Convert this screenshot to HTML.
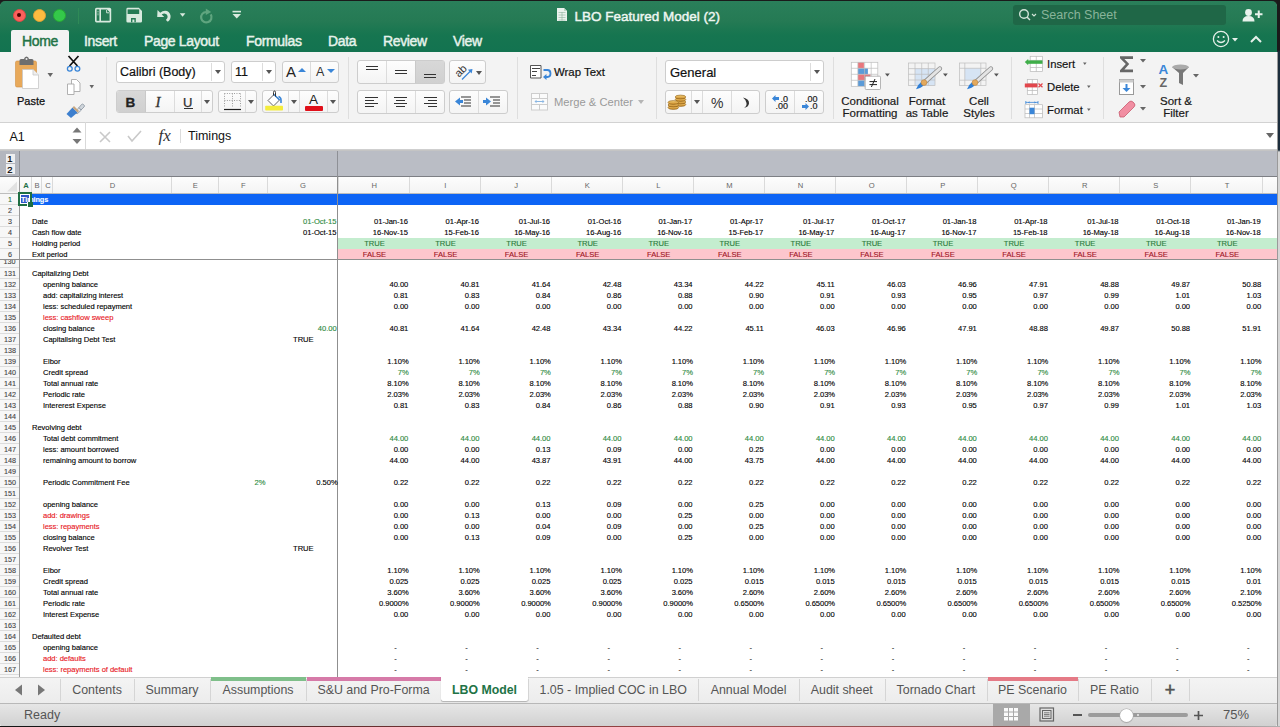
<!DOCTYPE html><html><head><meta charset="utf-8"><style>
*{margin:0;padding:0;box-sizing:border-box}
html,body{width:1280px;height:727px;overflow:hidden;background:#1e1e1e;font-family:"Liberation Sans",sans-serif}
.ab{position:absolute}
.t{position:absolute;white-space:nowrap;line-height:1}
.tab{position:absolute;top:34px;font-size:14px;letter-spacing:-0.35px;color:#e6f2eb;white-space:nowrap;line-height:1;-webkit-text-stroke:0.45px}
.btn{position:absolute;border:1px solid #cdcdcd;border-radius:3px;background:linear-gradient(#fdfdfd,#f4f4f4)}
.pr{background:linear-gradient(#d6d6d6,#cfcfcf);border-color:#b9b9b9}
.sep{position:absolute;width:1px;background:#dedede}
.vd{position:absolute;width:1px;background:#dcdcdc}
.dd{position:absolute;width:0;height:0;border-left:3px solid transparent;border-right:3px solid transparent;border-top:4px solid #555}
.c{position:absolute;white-space:nowrap;font-size:7.6px;line-height:11px;height:11px;color:#000;letter-spacing:-0.05px;-webkit-text-stroke:0.12px}
.rt{text-align:right}
.ct{text-align:center}
.lbl{position:absolute;font-size:11.5px;color:#1a1a1a;white-space:nowrap;line-height:1;text-align:center;-webkit-text-stroke:0.2px}
</style></head><body>

<div class="ab" style="left:0;top:2px;width:1277px;height:725px;background:#f3f3f3;border-radius:5px 5px 0 0;overflow:hidden">
</div>
<div class="ab" style="left:0;top:1.3px;width:1277px;height:50.7px;background:linear-gradient(#2a7f5a 0px,#257a54 20px,#1b7751 29px,#167550 34px,#137350 50px);border-radius:5px 5px 0 0"></div>
<div class="ab" style="left:12.5px;top:8.5px;width:13px;height:13px;border-radius:50%;background:#fc605c;border:1px solid #de4a46"></div>
<div class="ab" style="left:32.5px;top:8.5px;width:13px;height:13px;border-radius:50%;background:#fdbc40;border:1px solid #dea236"></div>
<div class="ab" style="left:52.5px;top:8.5px;width:13px;height:13px;border-radius:50%;background:#34c84a;border:1px solid #27aa35"></div>
<div class="ab" style="left:17px;top:13px;width:4px;height:4px;border-radius:50%;background:#4d0000"></div>
<div class="ab" style="left:78px;top:8px;width:1px;height:16px;background:#2f8a57"></div>
<svg class="ab" style="left:85px;top:2px" width="165" height="28" viewBox="0 0 165 28">
<rect x="10" y="5.8" width="16.2" height="14.6" rx="1.6" fill="#d9eadf"/>
<rect x="11.6" y="7.4" width="2.8" height="11.4" fill="#257a54"/>
<circle cx="13" cy="9.2" r="0.55" fill="#d9eadf"/><circle cx="13" cy="11" r="0.55" fill="#d9eadf"/><circle cx="13" cy="12.8" r="0.55" fill="#d9eadf"/>
<path d="M16 7.4h6l2.6 2.6v8.8h-8.6z" fill="#257a54"/>
<path d="M21.6 8v2.8h2.6" fill="none" stroke="#d9eadf" stroke-width="0.9"/>
<g transform="translate(-1.6 0)"><path d="M43 5.8h12.4l3.2 3.2v10.2q0 1.4 -1.4 1.4h-12.8q-1.4 0 -1.4 -1.4v-12q0 -1.4 1.4 -1.4z" fill="#d9eadf"/>
<rect x="44.2" y="7.4" width="11.6" height="4.6" fill="#257a54"/>
<path d="M47.6 20.2v-4.2h4.8v4.2h-1.4v-2.8h-2v2.8z" fill="#257a54"/></g>
<path transform="translate(-5.5 -3.2) scale(1.05)" d="M74 17.4l0.3 -6.8l2.6 2.6q2 -1.8 4.6 -1.8q4.2 0.2 5.2 4.4q0.5 3.6 -2.6 6l-1.8 -1.7q2 -1.6 1.6 -3.8q-0.6 -2.4 -3 -2.4q-1.4 0 -2.6 1l2.4 2.4z" fill="#d9eadf"/>
<path d="M179.7 0z" />
<path d="M94.8 11.2h5.6l-2.8 3.6z" fill="#d9eadf"/>
<g transform="translate(-1.2 -1.2)"><path d="M122.5 11.2a5.2 5.2 0 1 0 4.4 2.4" fill="none" stroke="#5fa57f" stroke-width="2.2"/>
<path d="M122 7.8l5.4 3.4l-5.4 3z" fill="#5fa57f"/></g>
<rect x="147.5" y="8.8" width="8.5" height="1.6" fill="#d9eadf"/>
<path d="M147.5 12h8.5l-4.25 4.5z" fill="#d9eadf"/>
</svg>
<svg class="ab" style="left:556px;top:7px" width="12" height="15"><path d="M1 1h7l3 3v10h-10z" fill="#eaf2ed"/><path d="M8 1v3h3" fill="#bcd5c6"/><path d="M2.5 5.5h7M2.5 8h7M2.5 10.5h7M2.5 13h7M6 5v8.5" stroke="#8fb29e" stroke-width="0.6"/></svg>
<div class="t" style="left:574.5px;top:9.6px;font-size:13.5px;color:#eef6f1;-webkit-text-stroke:0.45px">LBO Featured Model (2)</div>
<div class="ab" style="left:1013px;top:5px;width:213px;height:19.5px;background:#1f6747;border-radius:3px"></div>
<svg class="ab" style="left:1018px;top:8px" width="22" height="14"><circle cx="6" cy="6" r="4.3" fill="none" stroke="#d2e4d9" stroke-width="1.4"/><line x1="9" y1="9" x2="12" y2="12" stroke="#d2e4d9" stroke-width="1.5"/><path d="M14 6l2 2l2-2" fill="none" stroke="#d2e4d9" stroke-width="1.1"/></svg>
<div class="t" style="left:1041px;top:9px;font-size:12.5px;color:#88b49a">Search Sheet</div>
<svg class="ab" style="left:1240px;top:6px" width="24" height="18"><circle cx="8.5" cy="6.5" r="3.4" fill="#e8f2ec"/><path d="M2.5 15.5q0-5.5 6-5.5t6 5.5z" fill="#e8f2ec"/><path d="M15 8.2h7.5M18.75 4.5v7.5" stroke="#e8f2ec" stroke-width="2"/></svg>
<div class="ab" style="left:11px;top:30px;width:58px;height:24px;background:#f3f3f3;border-radius:2px 2px 0 0"></div>
<div class="tab" style="left:22px;color:#217346">Home</div>
<div class="tab" style="left:84px">Insert</div>
<div class="tab" style="left:144px">Page Layout</div>
<div class="tab" style="left:246px">Formulas</div>
<div class="tab" style="left:328px">Data</div>
<div class="tab" style="left:383px">Review</div>
<div class="tab" style="left:453px">View</div>
<svg class="ab" style="left:1210px;top:29px" width="60" height="20"><circle cx="11" cy="10" r="7.6" fill="none" stroke="#e6f0ea" stroke-width="1.3"/><circle cx="8.4" cy="8" r="1" fill="#e6f0ea"/><circle cx="13.6" cy="8" r="1" fill="#e6f0ea"/><path d="M7 11.5q4 4 8 0" fill="none" stroke="#e6f0ea" stroke-width="1.2"/><path d="M22 9l3 3.5l3-3.5z" fill="#e6f0ea"/><path d="M41 13l5-5l5 5" fill="none" stroke="#e6f0ea" stroke-width="2"/></svg>
<div class="ab" style="left:0;top:52px;width:1277px;height:70px;background:#f3f3f3"></div>
<svg class="ab" style="left:0px;top:52px" width="100" height="70" viewBox="0 0 100 70">
<rect x="15.5" y="9" width="21" height="26" rx="1.5" fill="#e8a95a" stroke="#d18f40" stroke-width="0.6"/>
<path d="M19.5 8.5q0-1.5 1.5-1.5h3q0.5-2.5 2.5-2.5t2.5 2.5h3q1.5 0 1.5 1.5v4.5h-14z" fill="#6e6e6e"/>
<circle cx="26.5" cy="7" r="1" fill="#e8e8e8"/>
<path d="M22.5 17.5h10.5l5.5 5.5v13.5h-16z" fill="#fff" stroke="#c8c8c8" stroke-width="0.8"/>
<path d="M33 17.5v5.5h5.5" fill="#eee" stroke="#c8c8c8" stroke-width="0.8"/>
<path d="M47.5 21l2.75 4l2.75-4z" fill="#666"/>
<path d="M68.5 4l9 10M78.5 4l-9 10" stroke="#111" stroke-width="1.7"/>
<circle cx="69.8" cy="16.8" r="2.4" fill="none" stroke="#3a86d8" stroke-width="1.3"/><circle cx="77.4" cy="16.8" r="2.4" fill="none" stroke="#3a86d8" stroke-width="1.3"/>
<path d="M71.5 27.5h5l3.5 3.5v8.5h-8.5z" fill="#fff" stroke="#a8a8a8" stroke-width="0.9"/>
<path d="M67.5 32h6.5v10.5h-6.5z" fill="#fff" stroke="#a8a8a8" stroke-width="0.9"/>
<path d="M89.5 33l2.25 3.5l2.25-3.5z" fill="#666"/>
<path d="M75 60l4-4.5l2.5 2.5l-4.5 4z" fill="#dfe3e8" stroke="#7e8a96" stroke-width="0.7"/>
<path d="M79 55.5l2.5-3q1-1 2 0l0.5 0.5q1 1 0 2l-3 3z" fill="#cfd5db" stroke="#7e8a96" stroke-width="0.7"/>
<path d="M66.5 62l6-6.5l5 5l-6.5 5.5z" fill="#3d7fce"/>
<path d="M72.5 55.5l1.5-1.5l5 5l-1.5 1.5z" fill="#c9a77f"/>
</svg>
<div class="t" style="left:17px;top:96px;font-size:11px;color:#111;-webkit-text-stroke:0.25px">Paste</div>
<div class="sep" style="left:106px;top:57px;height:62px"></div>
<div class="btn" style="left:116px;top:61px;width:109px;height:22px;background:#fff"></div>
<div class="vd" style="left:211px;top:63px;height:18px"></div>
<div class="t" style="left:120px;top:66px;font-size:12.5px;color:#111;-webkit-text-stroke:0.2px">Calibri (Body)</div>
<div class="dd" style="left:215px;top:70px"></div>
<div class="btn" style="left:231px;top:61px;width:45px;height:22px;background:#fff"></div>
<div class="vd" style="left:262px;top:63px;height:18px"></div>
<div class="t" style="left:235px;top:66px;font-size:12.5px;color:#111;-webkit-text-stroke:0.2px">11</div>
<div class="dd" style="left:266px;top:70px"></div>
<div class="btn" style="left:282px;top:61px;width:57px;height:22px"></div>
<div class="vd" style="left:310px;top:62px;height:20px"></div>
<div class="t" style="left:286px;top:64px;font-size:15px;color:#222">A</div>
<svg class="ab" style="left:298px;top:67px" width="8" height="5"><path d="M0 5l4-4l4 4z" fill="#3a86d8"/></svg>
<div class="t" style="left:316px;top:66px;font-size:12.5px;color:#333">A</div>
<svg class="ab" style="left:327px;top:69px" width="8" height="5"><path d="M0 0h8l-4 4z" fill="#3a86d8"/></svg>
<div class="btn" style="left:116px;top:90px;width:97px;height:23px"></div>
<div class="ab" style="left:117px;top:91px;width:28px;height:21px;background:linear-gradient(#d8d8d8,#d0d0d0);border-radius:2px 0 0 2px"></div>
<div class="vd" style="left:145px;top:91px;height:21px;background:#c9c9c9"></div>
<div class="vd" style="left:174px;top:91px;height:21px"></div>
<div class="vd" style="left:201px;top:91px;height:21px"></div>
<div class="t" style="left:125.5px;top:96px;font-size:13.5px;font-weight:bold;color:#222;-webkit-text-stroke:0.3px">B</div>
<div class="t" style="left:155.5px;top:95px;font-size:15px;font-style:italic;font-family:'Liberation Serif',serif;color:#333;-webkit-text-stroke:0.3px">I</div>
<div class="t" style="left:183px;top:96px;font-size:13px;color:#333;-webkit-text-stroke:0.25px">U</div><div class="ab" style="left:183.5px;top:107.8px;width:9.5px;height:1.2px;background:#333"></div>
<div class="dd" style="left:204px;top:100px"></div>
<div class="btn" style="left:218px;top:90px;width:39px;height:23px"></div>
<div class="vd" style="left:245px;top:91px;height:21px"></div>
<svg class="ab" style="left:222px;top:91px" width="22" height="20"><g stroke="#8a8a8a" stroke-width="0.9" stroke-dasharray="0.9 1.5"><path d="M2.5 2.5h16M2.5 9.5h16M2.5 2.5v14M10.5 2.5v14M18.5 2.5v14"/></g><path d="M2 18.5h17" stroke="#222" stroke-width="1.2"/></svg>
<div class="dd" style="left:248px;top:100px"></div>
<div class="btn" style="left:262px;top:90px;width:77px;height:23px"></div>
<div class="vd" style="left:287.5px;top:91px;height:21px"></div>
<div class="vd" style="left:299px;top:91px;height:21px"></div>
<div class="vd" style="left:327px;top:91px;height:21px"></div>
<svg class="ab" style="left:258px;top:86px" width="30" height="30"><path d="M10 14.5l6-6l5.5 5.5l-6 6z" fill="#fff" stroke="#555" stroke-width="0.9"/><path d="M16 8.5l5.5 5.5" stroke="#3a86d8" stroke-width="1.4"/><path d="M15.5 9.5v-3q0-1.5 1-1.5t1 1.5v4" fill="none" stroke="#333" stroke-width="1"/><path d="M20.5 10.5q2.5 1 2.5 3.5v3" fill="none" stroke="#3a86d8" stroke-width="1.6"/><rect x="7.2" y="19.7" width="17.8" height="4.9" rx="0.8" fill="#f4ec3c"/></svg>
<div class="dd" style="left:291px;top:100px"></div>
<div class="t" style="left:309px;top:93px;font-size:13.5px;color:#222">A</div>
<div class="ab" style="left:305px;top:106px;width:18px;height:4.8px;background:#e0101a;border-radius:1px"></div>
<div class="dd" style="left:330px;top:100px"></div>
<div class="sep" style="left:348px;top:57px;height:62px"></div>
<div class="btn" style="left:357px;top:60px;width:88px;height:24px"></div>
<div class="ab" style="left:416px;top:61px;width:28px;height:22px;background:linear-gradient(#d8d8d8,#d0d0d0)"></div>
<div class="vd" style="left:386px;top:61px;height:22px"></div><div class="vd" style="left:415px;top:61px;height:22px;background:#c9c9c9"></div>
<svg class="ab" style="left:357px;top:60px" width="88" height="24"><g stroke="#333" stroke-width="1.1"><path d="M9 6.5h12M9 9.5h12"/><path d="M38 10.5h12M38 13.5h12"/><path d="M67 14.5h12M67 17.5h12"/></g></svg>
<div class="btn" style="left:449px;top:60px;width:37px;height:24px"></div>
<svg class="ab" style="left:449px;top:60px" width="37" height="24"><text x="5" y="14" font-size="11" font-family="Liberation Sans" fill="#333" transform="rotate(-45 12 10)">ab</text><path d="M13 19.5l9.5-9.5" stroke="#3a86d8" stroke-width="1.2"/><path d="M23.5 9l-4.6 0.8l3.8 3.8z" fill="#3a86d8"/></svg>
<div class="dd" style="left:476px;top:71px"></div>
<div class="btn" style="left:357px;top:90px;width:88px;height:24px"></div>
<div class="vd" style="left:386px;top:91px;height:22px"></div><div class="vd" style="left:415px;top:91px;height:22px"></div>
<svg class="ab" style="left:357px;top:90px" width="88" height="24"><g stroke="#333" stroke-width="1"><path d="M8 7.5h13M8 10.5h9M8 13.5h13M8 16.5h9"/><path d="M37 7.5h13M39 10.5h9M37 13.5h13M39 16.5h9"/><path d="M67 7.5h13M71 10.5h9M67 13.5h13M71 16.5h9"/></g></svg>
<div class="btn" style="left:449px;top:90px;width:59px;height:24px"></div>
<div class="vd" style="left:478px;top:91px;height:22px"></div>
<svg class="ab" style="left:449px;top:90px" width="59" height="24"><g stroke="#333" stroke-width="1.1"><path d="M12 7h10M15 10h7M15 13h7M12 16h10"/><path d="M41 7h10M44 10h7M44 13h7M41 16h10"/></g><path d="M6 11.5l5-4v8z" fill="#3a86d8"/><path d="M11 10h3v3h-3z" fill="#3a86d8"/><path d="M42 11.5l-5-4v8z" fill="#3a86d8"/><path d="M34 10h4v3h-4z" fill="#3a86d8"/></svg>
<div class="sep" style="left:517px;top:57px;height:62px"></div>
<svg class="ab" style="left:529px;top:64px" width="24" height="16"><path d="M1.5 1.5h10.5v12.5h-10.5z" fill="#fff" stroke="#555" stroke-width="1"/><path d="M3 4.5h8M3 7.5h5M3 11.5h4" stroke="#444" stroke-width="1"/><path d="M14.5 6h4q3 0 3 3.5t-3 3.5h-2" fill="none" stroke="#3a86d8" stroke-width="1.8"/><path d="M14 13l3.5-3v6z" fill="#3a86d8"/></svg>
<div class="t" style="left:554px;top:67px;font-size:11.4px;color:#111;-webkit-text-stroke:0.2px">Wrap Text</div>
<svg class="ab" style="left:530px;top:92px" width="19" height="19"><rect x="1.5" y="1.5" width="16" height="16.5" fill="#fbfbfb" stroke="#cdcdcd" stroke-width="1"/><path d="M1.5 6.5h16M1.5 12.5h16M9.5 1.5v5M9.5 12.5v5.5" stroke="#cdcdcd" stroke-width="1"/><path d="M5 9.5h9" stroke="#8ab6e2" stroke-width="1"/><path d="M4.5 9.5l2-1.8v3.6zM14.5 9.5l-2-1.8v3.6z" fill="#8ab6e2"/></svg>
<div class="t" style="left:554px;top:97px;font-size:11.2px;color:#9a9a9a">Merge &amp; Center</div>
<div class="dd" style="left:638px;top:100px;border-top-color:#b5b5b5"></div>
<div class="sep" style="left:656px;top:57px;height:62px"></div>
<div class="btn" style="left:665px;top:60px;width:159px;height:24px;background:#fff"></div>
<div class="vd" style="left:810px;top:63px;height:18px"></div>
<div class="t" style="left:670px;top:66px;font-size:13px;color:#111;-webkit-text-stroke:0.2px">General</div>
<div class="dd" style="left:814px;top:70px"></div>
<div class="btn" style="left:665px;top:90px;width:95px;height:24px"></div>
<div class="vd" style="left:691px;top:91px;height:22px"></div><div class="vd" style="left:702px;top:91px;height:22px"></div><div class="vd" style="left:731px;top:91px;height:22px"></div>
<svg class="ab" style="left:660px;top:85px" width="170" height="35" viewBox="0 0 170 35"><defs><linearGradient id="cg" x1="0" y1="0" x2="0" y2="1"><stop offset="0" stop-color="#f6d27a"/><stop offset="1" stop-color="#c98a2a"/></linearGradient></defs><g fill="url(#cg)" stroke="#8a5a14" stroke-width="0.6"><ellipse cx="20.5" cy="19.5" rx="5.3" ry="1.9"/><ellipse cx="20.5" cy="17" rx="5.3" ry="1.9"/><ellipse cx="20.5" cy="14.5" rx="5.3" ry="1.9"/><ellipse cx="20.5" cy="12" rx="5.3" ry="1.9"/><ellipse cx="13.3" cy="22.5" rx="5.3" ry="1.9"/><ellipse cx="13.3" cy="20" rx="5.3" ry="1.9"/><ellipse cx="13.3" cy="17.5" rx="5.3" ry="1.9"/></g><path d="M83 12.5q6.5 1.5 6 6q-0.5 3.5 -5 4.5q3 -2 2.5 -5q-0.3 -3 -3.5 -5.5z" fill="#333"/><path d="M112 13.5l3.5-3.5v2h3.5v3h-3.5v2z" fill="#3a86d8"/><path d="M149 21.5l-3.5-3.5v2h-3.5v3h3.5v2z" fill="#3a86d8"/></svg>
<div class="dd" style="left:694px;top:100px"></div>
<div class="btn" style="left:765px;top:90px;width:59px;height:24px"></div>
<div class="vd" style="left:794px;top:91px;height:22px"></div>
<svg class="ab" style="left:660px;top:85px" width="170" height="35" viewBox="0 0 170 35"><path d="M112 13.5l3.5-3.5v2h3.5v3h-3.5v2z" fill="#3a86d8"/><path d="M149 21.5l-3.5-3.5v2h-3.5v3h3.5v2z" fill="#3a86d8"/></svg>
<div class="t" style="left:711px;top:96px;font-size:14px;color:#333">%</div>
<div class="t" style="left:780.5px;top:94.5px;font-size:9px;color:#222;-webkit-text-stroke:0.2px">.0</div>
<div class="t" style="left:775.5px;top:102px;font-size:9px;color:#222;-webkit-text-stroke:0.2px">.00</div>
<div class="t" style="left:805px;top:94.5px;font-size:9px;color:#222;-webkit-text-stroke:0.2px">.00</div>
<div class="t" style="left:810px;top:102px;font-size:9px;color:#222;-webkit-text-stroke:0.2px">.0</div>
<div class="sep" style="left:833px;top:57px;height:62px"></div>
<svg class="ab" style="left:840px;top:55px" width="170" height="40" viewBox="0 0 170 40">
<rect x="11.3" y="7.3" width="26.5" height="24" fill="#fff"/>
<rect x="17.9" y="7.3" width="6" height="6" fill="#e8777d"/><rect x="17.9" y="13.3" width="10" height="6" fill="#5b9bd8"/><rect x="17.9" y="19.3" width="12.6" height="6" fill="#e8777d"/><rect x="17.9" y="25.3" width="6.7" height="5.9" fill="#5b9bd8"/>
<g fill="none" stroke="#bdbdbd" stroke-width="0.7"><rect x="11.3" y="7.3" width="26.5" height="24"/><path d="M17.9 7.3v24M24.6 7.3v24M31.2 7.3v24M11.3 13.3h26.5M11.3 19.3h26.5M11.3 25.3h26.5"/></g>
<rect x="25.2" y="21.2" width="15.3" height="13.3" rx="1" fill="#fff" stroke="#9a9a9a" stroke-width="0.7"/>
<path d="M29.5 26.6h7.5M29.5 29.6h7.5M35 24l-3.6 8" stroke="#222" stroke-width="1"/>
<path d="M45 18.6h4.8l-2.4 2.8z" fill="#555"/>
<rect x="75" y="13.6" width="20" height="16.9" fill="#d6e4f4"/>
<g fill="none" stroke="#bdbdbd" stroke-width="0.7"><rect x="68.4" y="8" width="26.6" height="22.5"/><path d="M75 8v22.5M81.7 8v22.5M88.3 8v22.5M68.4 13.6h26.6M68.4 19.3h26.6M68.4 25h26.6"/></g>
<g transform="translate(0 0)"><path d="M99.8 13.6l-13.8 12.4" stroke="#8e8e8e" stroke-width="4.6" stroke-linecap="round"/><path d="M99.8 13.6l-13.8 12.4" stroke="#e4e4e4" stroke-width="3" stroke-linecap="round"/><path d="M76 34.2q1.5 -4.5 5 -7l3 2.6q-3 3.6 -8 4.4z" fill="#2f7fd6"/><circle cx="84" cy="27.6" r="2.9" fill="#e3a95c" stroke="#b57a35" stroke-width="0.5"/></g>
<path d="M103 18.6h4.8l-2.4 2.8z" fill="#555"/>
<rect x="124.8" y="13.3" width="16" height="11.9" fill="#d6e4f4"/>
<g fill="none" stroke="#bdbdbd" stroke-width="0.7"><rect x="119.5" y="8" width="26.5" height="22.5"/><path d="M124.8 8v22.5M140.8 8v22.5M119.5 13.3h26.5M119.5 25.2h26.5"/></g>
<g transform="translate(51 0)"><path d="M99.8 13.6l-13.8 12.4" stroke="#8e8e8e" stroke-width="4.6" stroke-linecap="round"/><path d="M99.8 13.6l-13.8 12.4" stroke="#e4e4e4" stroke-width="3" stroke-linecap="round"/><path d="M76 34.2q1.5 -4.5 5 -7l3 2.6q-3 3.6 -8 4.4z" fill="#2f7fd6"/><circle cx="84" cy="27.6" r="2.9" fill="#e3a95c" stroke="#b57a35" stroke-width="0.5"/></g>
<path d="M154 18.6h4.8l-2.4 2.8z" fill="#555"/>
</svg>
<div class="lbl" style="left:830px;top:96px;width:80px">Conditional</div>
<div class="lbl" style="left:830px;top:108px;width:80px">Formatting</div>
<div class="lbl" style="left:897px;top:96px;width:60px">Format</div>
<div class="lbl" style="left:897px;top:108px;width:60px">as Table</div>
<div class="lbl" style="left:949px;top:96px;width:60px">Cell</div>
<div class="lbl" style="left:949px;top:108px;width:60px">Styles</div>
<div class="sep" style="left:1011px;top:57px;height:62px"></div>
<svg class="ab" style="left:1015px;top:52px" width="85" height="70" viewBox="0 0 85 70">
<g fill="#fff" stroke="#b8b8b8" stroke-width="0.7"><rect x="15.2" y="4.3" width="12.3" height="15.2"/></g>
<path d="M15.2 8.4h12.3M15.2 15.5h12.3M21.3 4.3v15.2" stroke="#b8b8b8" stroke-width="0.7"/>
<rect x="13" y="8.4" width="14.5" height="3.4" fill="#3fae49"/><path d="M9.8 10.1l3.4 -3.2v6.4z" fill="#3fae49"/>
<g fill="#fff" stroke="#b8b8b8" stroke-width="0.7"><rect x="12.3" y="27.5" width="10.1" height="15.1"/></g>
<path d="M12.3 31.5h10.1M12.3 38.5h10.1M17.3 27.5v15.1" stroke="#b8b8b8" stroke-width="0.7"/>
<rect x="9.8" y="31.5" width="12.6" height="3.9" fill="#e2464c"/><path d="M23.5 31.5l4 3.8M27.5 31.5l-4 3.8" stroke="#e2464c" stroke-width="1.2"/>
<path d="M10.8 50.4h12.2" stroke="#3a86d8" stroke-width="0.8"/><path d="M10.8 49v3M23 49v3" stroke="#3a86d8" stroke-width="0.8"/><path d="M13 50.4l1.5-1.2v2.4zM21 50.4l-1.5-1.2v2.4z" fill="#3a86d8"/>
<g fill="#fff" stroke="#b8b8b8" stroke-width="0.7"><rect x="10" y="52.7" width="17.5" height="13.1"/></g>
<path d="M10 57h17.5M10 61.5h17.5M14.5 52.7v13.1M19.5 52.7v13.1" stroke="#b8b8b8" stroke-width="0.7"/>
<rect x="14.5" y="55.7" width="5" height="6.5" fill="#3a86d8"/>
<path d="M68 10.4h3.6l-1.8 2.6zM72 33.4h3.6l-1.8 2.6zM72 56.4h3.6l-1.8 2.6z" fill="#666"/>
</svg>
<div class="t" style="left:1047px;top:59px;font-size:11.3px;color:#111;-webkit-text-stroke:0.15px">Insert</div>
<div class="t" style="left:1047px;top:82px;font-size:11.3px;color:#111;-webkit-text-stroke:0.15px">Delete</div>
<div class="t" style="left:1047px;top:105px;font-size:11.3px;color:#111;-webkit-text-stroke:0.15px">Format</div>
<div class="sep" style="left:1103px;top:57px;height:62px"></div>
<svg class="ab" style="left:1116px;top:55px" width="90" height="64" viewBox="0 0 90 64">
<path d="M4 1.3h13v2.8h-8.6l4.8 5l-4.8 5.3h8.6v2.8h-13v-2l5.8-6.1l-5.8-5.8z" fill="#666"/>
<path d="M24 4l3 3.5l3-3.5z" fill="#666"/>
<rect x="3.5" y="24.5" width="14" height="15" fill="#fff" stroke="#999"/><rect x="3.5" y="24.5" width="14" height="3" fill="#ccc"/><path d="M10.5 29v5" stroke="#3a86d8" stroke-width="2"/><path d="M6.5 33h8l-4 4z" fill="#3a86d8"/>
<path d="M24 30l3 3.5l3-3.5z" fill="#666"/>
<path d="M3 57l10-10q2-2 4 0l1 1q2 2 0 4l-10 10h-4z" fill="#f18ea2" stroke="#c85a6f" stroke-width="0.8"/>
<path d="M24 52l3 3.5l3-3.5z" fill="#666"/>
<text x="42.5" y="18.6" font-size="13.5" font-weight="bold" font-family="Liberation Sans" fill="#3a86d8">A</text>
<text x="43.5" y="31.8" font-size="12.5" font-weight="bold" font-family="Liberation Sans" fill="#666">Z</text>
<path d="M56 12q9-4 17 0l-6 6v12l-4-2v-10z" fill="#777"/><ellipse cx="64.5" cy="12" rx="8" ry="2.5" fill="#aaa"/>
<path d="M77 19l3 3.5l3-3.5z" fill="#666"/>
</svg>
<div class="lbl" style="left:1146px;top:96px;width:60px">Sort &amp;</div>
<div class="lbl" style="left:1146px;top:108px;width:60px">Filter</div>
<div class="ab" style="left:0;top:121.5px;width:1277px;height:1px;background:#d2d2d2"></div>
<div class="ab" style="left:0;top:122.5px;width:1277px;height:26.5px;background:#fff"></div>
<div class="ab" style="left:85px;top:122px;width:1px;height:28px;background:#d9d9d9"></div>
<div class="t" style="left:9.5px;top:131px;font-size:12.5px;color:#111">A1</div>
<svg class="ab" style="left:71.5px;top:126px" width="10" height="20"><path d="M0.5 6.5l4.5-5l4.5 5z" fill="#777"/><path d="M0.5 13l4.5 5l4.5-5z" fill="#777"/></svg>
<svg class="ab" style="left:99px;top:131px" width="14" height="12"><path d="M1 1l10 10M11 1l-10 10" stroke="#c9c9c9" stroke-width="1.6"/></svg>
<svg class="ab" style="left:127px;top:130px" width="16" height="13"><path d="M1 6l4 5l9-10" fill="none" stroke="#c9c9c9" stroke-width="1.6"/></svg>
<div class="t" style="left:158.5px;top:127px;font-size:17px;font-style:italic;font-family:'Liberation Serif',serif;color:#333">fx</div>
<div class="ab" style="left:180px;top:129px;width:1px;height:14px;background:#dcdcdc"></div>
<div class="t" style="left:188px;top:130px;font-size:12.5px;color:#111">Timings</div>
<svg class="ab" style="left:1265px;top:132px" width="10" height="8"><path d="M1 1h8l-4 5z" fill="#666"/></svg>
<div class="ab" style="left:0;top:148.8px;width:1277px;height:1px;background:#cfcfcf"></div>
<div class="ab" style="left:0;top:150.3px;width:1277px;height:1px;background:#c4c4c4"></div>
<div class="ab" style="left:0;top:151px;width:1277px;height:25px;background:#babdc5"></div>
<div class="ab" style="left:0;top:151px;width:20px;height:25px;background:#b3b6be"></div>
<div class="ab" style="left:19px;top:151px;width:1px;height:25px;background:#8e9096"></div>
<div class="ab" style="left:337px;top:151px;width:1px;height:25px;background:#8e9096"></div>
<div class="ab" style="left:5.5px;top:153.5px;width:9px;height:9.5px;background:#eeeff1"></div>
<div class="ab" style="left:5.5px;top:164px;width:9px;height:9.5px;background:#eeeff1"></div>
<div class="t" style="left:5.5px;top:154px;width:9px;text-align:center;font-size:9.5px;color:#000;-webkit-text-stroke:0.2px">1</div>
<div class="t" style="left:5.5px;top:164.5px;width:9px;text-align:center;font-size:9.5px;color:#000;-webkit-text-stroke:0.2px">2</div>
<div class="ab" style="left:0;top:175.6px;width:1277px;height:1.2px;background:#7d7f84"></div>
<div class="ab" style="left:0;top:176.8px;width:1277px;height:500.2px;background:#fff"></div>
<div class="ab" style="left:0;top:176.8px;width:1277px;height:16.6px;background:linear-gradient(#fdfdfd,#f4f4f4)"></div>
<svg class="ab" style="left:7px;top:181px" width="11" height="11"><path d="M10 0.5v10h-10z" fill="#e2e2e2"/></svg>
<div class="ab" style="left:30.60px;top:177px;width:1px;height:16px;background:#dadada"></div>
<div class="c ct" style="left:20.50px;top:179.5px;width:11.10px;font-size:7.6px;letter-spacing:0;-webkit-text-stroke:0;color:#1e7145;font-weight:bold">A</div>
<div class="ab" style="left:41.40px;top:177px;width:1px;height:16px;background:#dadada"></div>
<div class="c ct" style="left:31.60px;top:179.5px;width:10.80px;font-size:7.6px;letter-spacing:0;-webkit-text-stroke:0;color:#666;font-weight:normal">B</div>
<div class="ab" style="left:52.40px;top:177px;width:1px;height:16px;background:#dadada"></div>
<div class="c ct" style="left:42.40px;top:179.5px;width:11.00px;font-size:7.6px;letter-spacing:0;-webkit-text-stroke:0;color:#666;font-weight:normal">C</div>
<div class="ab" style="left:170.60px;top:177px;width:1px;height:16px;background:#dadada"></div>
<div class="c ct" style="left:53.40px;top:179.5px;width:118.20px;font-size:7.6px;letter-spacing:0;-webkit-text-stroke:0;color:#666;font-weight:normal">D</div>
<div class="ab" style="left:218.00px;top:177px;width:1px;height:16px;background:#dadada"></div>
<div class="c ct" style="left:171.60px;top:179.5px;width:47.40px;font-size:7.6px;letter-spacing:0;-webkit-text-stroke:0;color:#666;font-weight:normal">E</div>
<div class="ab" style="left:266.50px;top:177px;width:1px;height:16px;background:#dadada"></div>
<div class="c ct" style="left:219.00px;top:179.5px;width:48.50px;font-size:7.6px;letter-spacing:0;-webkit-text-stroke:0;color:#666;font-weight:normal">F</div>
<div class="ab" style="left:337.60px;top:177px;width:1px;height:16px;background:#dadada"></div>
<div class="c ct" style="left:267.50px;top:179.5px;width:71.10px;font-size:7.6px;letter-spacing:0;-webkit-text-stroke:0;color:#666;font-weight:normal">G</div>
<div class="ab" style="left:408.67px;top:177px;width:1px;height:16px;background:#dadada"></div>
<div class="c ct" style="left:338.60px;top:179.5px;width:71.07px;font-size:7.6px;letter-spacing:0;-webkit-text-stroke:0;color:#666;font-weight:normal">H</div>
<div class="ab" style="left:479.74px;top:177px;width:1px;height:16px;background:#dadada"></div>
<div class="c ct" style="left:409.67px;top:179.5px;width:71.07px;font-size:7.6px;letter-spacing:0;-webkit-text-stroke:0;color:#666;font-weight:normal">I</div>
<div class="ab" style="left:550.81px;top:177px;width:1px;height:16px;background:#dadada"></div>
<div class="c ct" style="left:480.74px;top:179.5px;width:71.07px;font-size:7.6px;letter-spacing:0;-webkit-text-stroke:0;color:#666;font-weight:normal">J</div>
<div class="ab" style="left:621.88px;top:177px;width:1px;height:16px;background:#dadada"></div>
<div class="c ct" style="left:551.81px;top:179.5px;width:71.07px;font-size:7.6px;letter-spacing:0;-webkit-text-stroke:0;color:#666;font-weight:normal">K</div>
<div class="ab" style="left:692.95px;top:177px;width:1px;height:16px;background:#dadada"></div>
<div class="c ct" style="left:622.88px;top:179.5px;width:71.07px;font-size:7.6px;letter-spacing:0;-webkit-text-stroke:0;color:#666;font-weight:normal">L</div>
<div class="ab" style="left:764.02px;top:177px;width:1px;height:16px;background:#dadada"></div>
<div class="c ct" style="left:693.95px;top:179.5px;width:71.07px;font-size:7.6px;letter-spacing:0;-webkit-text-stroke:0;color:#666;font-weight:normal">M</div>
<div class="ab" style="left:835.08px;top:177px;width:1px;height:16px;background:#dadada"></div>
<div class="c ct" style="left:765.02px;top:179.5px;width:71.07px;font-size:7.6px;letter-spacing:0;-webkit-text-stroke:0;color:#666;font-weight:normal">N</div>
<div class="ab" style="left:906.15px;top:177px;width:1px;height:16px;background:#dadada"></div>
<div class="c ct" style="left:836.08px;top:179.5px;width:71.07px;font-size:7.6px;letter-spacing:0;-webkit-text-stroke:0;color:#666;font-weight:normal">O</div>
<div class="ab" style="left:977.22px;top:177px;width:1px;height:16px;background:#dadada"></div>
<div class="c ct" style="left:907.15px;top:179.5px;width:71.07px;font-size:7.6px;letter-spacing:0;-webkit-text-stroke:0;color:#666;font-weight:normal">P</div>
<div class="ab" style="left:1048.29px;top:177px;width:1px;height:16px;background:#dadada"></div>
<div class="c ct" style="left:978.22px;top:179.5px;width:71.07px;font-size:7.6px;letter-spacing:0;-webkit-text-stroke:0;color:#666;font-weight:normal">Q</div>
<div class="ab" style="left:1119.36px;top:177px;width:1px;height:16px;background:#dadada"></div>
<div class="c ct" style="left:1049.29px;top:179.5px;width:71.07px;font-size:7.6px;letter-spacing:0;-webkit-text-stroke:0;color:#666;font-weight:normal">R</div>
<div class="ab" style="left:1190.43px;top:177px;width:1px;height:16px;background:#dadada"></div>
<div class="c ct" style="left:1120.36px;top:179.5px;width:71.07px;font-size:7.6px;letter-spacing:0;-webkit-text-stroke:0;color:#666;font-weight:normal">S</div>
<div class="ab" style="left:1261.50px;top:177px;width:1px;height:16px;background:#dadada"></div>
<div class="c ct" style="left:1191.43px;top:179.5px;width:71.07px;font-size:7.6px;letter-spacing:0;-webkit-text-stroke:0;color:#666;font-weight:normal">T</div>
<div class="ab" style="left:1261.50px;top:177px;width:1px;height:16px;background:#dadada"></div>
<div class="ab" style="left:0;top:192.8px;width:1277px;height:0.8px;background:#bdbdbd"></div>
<div class="ab" style="left:0;top:193.5px;width:19.5px;height:484px;background:#f7f7f7"></div>
<div class="ab" style="left:19px;top:176px;width:1px;height:501px;background:#9a9a9a"></div>
<div class="c ct" style="left:0.6px;top:193.80px;width:19px;color:#1e7145;font-size:7.2px;letter-spacing:0">1</div>
<div class="ab" style="left:0;top:204.00px;width:19px;height:0.7px;background:#dcdcdc"></div>
<div class="c ct" style="left:0.6px;top:204.80px;width:19px;color:#444;font-size:7.2px;letter-spacing:0">2</div>
<div class="ab" style="left:0;top:215.00px;width:19px;height:0.7px;background:#dcdcdc"></div>
<div class="c ct" style="left:0.6px;top:215.80px;width:19px;color:#444;font-size:7.2px;letter-spacing:0">3</div>
<div class="ab" style="left:0;top:226.00px;width:19px;height:0.7px;background:#dcdcdc"></div>
<div class="c ct" style="left:0.6px;top:226.80px;width:19px;color:#444;font-size:7.2px;letter-spacing:0">4</div>
<div class="ab" style="left:0;top:237.00px;width:19px;height:0.7px;background:#dcdcdc"></div>
<div class="c ct" style="left:0.6px;top:237.80px;width:19px;color:#444;font-size:7.2px;letter-spacing:0">5</div>
<div class="ab" style="left:0;top:248.00px;width:19px;height:0.7px;background:#dcdcdc"></div>
<div class="c ct" style="left:0.6px;top:248.80px;width:19px;color:#444;font-size:7.2px;letter-spacing:0">6</div>
<div class="ab" style="left:0;top:259.00px;width:19px;height:0.7px;background:#dcdcdc"></div>
<div class="ab" style="left:0;top:259.5px;width:19px;height:7.80px;overflow:hidden"><div class="c ct" style="left:0;top:-3.20px;width:19px;color:#444;font-size:7.2px;letter-spacing:0">130</div></div>
<div class="ab" style="left:0;top:266.80px;width:19px;height:0.7px;background:#dcdcdc"></div>
<div class="c ct" style="left:0.6px;top:267.60px;width:19px;color:#444;font-size:7.2px;letter-spacing:0">131</div>
<div class="ab" style="left:0;top:277.80px;width:19px;height:0.7px;background:#dcdcdc"></div>
<div class="c ct" style="left:0.6px;top:278.60px;width:19px;color:#444;font-size:7.2px;letter-spacing:0">132</div>
<div class="ab" style="left:0;top:288.80px;width:19px;height:0.7px;background:#dcdcdc"></div>
<div class="c ct" style="left:0.6px;top:289.60px;width:19px;color:#444;font-size:7.2px;letter-spacing:0">133</div>
<div class="ab" style="left:0;top:299.80px;width:19px;height:0.7px;background:#dcdcdc"></div>
<div class="c ct" style="left:0.6px;top:300.60px;width:19px;color:#444;font-size:7.2px;letter-spacing:0">134</div>
<div class="ab" style="left:0;top:310.80px;width:19px;height:0.7px;background:#dcdcdc"></div>
<div class="c ct" style="left:0.6px;top:311.60px;width:19px;color:#444;font-size:7.2px;letter-spacing:0">135</div>
<div class="ab" style="left:0;top:321.80px;width:19px;height:0.7px;background:#dcdcdc"></div>
<div class="c ct" style="left:0.6px;top:322.60px;width:19px;color:#444;font-size:7.2px;letter-spacing:0">136</div>
<div class="ab" style="left:0;top:332.80px;width:19px;height:0.7px;background:#dcdcdc"></div>
<div class="c ct" style="left:0.6px;top:333.60px;width:19px;color:#444;font-size:7.2px;letter-spacing:0">137</div>
<div class="ab" style="left:0;top:343.80px;width:19px;height:0.7px;background:#dcdcdc"></div>
<div class="c ct" style="left:0.6px;top:344.60px;width:19px;color:#444;font-size:7.2px;letter-spacing:0">138</div>
<div class="ab" style="left:0;top:354.80px;width:19px;height:0.7px;background:#dcdcdc"></div>
<div class="c ct" style="left:0.6px;top:355.60px;width:19px;color:#444;font-size:7.2px;letter-spacing:0">139</div>
<div class="ab" style="left:0;top:365.80px;width:19px;height:0.7px;background:#dcdcdc"></div>
<div class="c ct" style="left:0.6px;top:366.60px;width:19px;color:#444;font-size:7.2px;letter-spacing:0">140</div>
<div class="ab" style="left:0;top:376.80px;width:19px;height:0.7px;background:#dcdcdc"></div>
<div class="c ct" style="left:0.6px;top:377.60px;width:19px;color:#444;font-size:7.2px;letter-spacing:0">141</div>
<div class="ab" style="left:0;top:387.80px;width:19px;height:0.7px;background:#dcdcdc"></div>
<div class="c ct" style="left:0.6px;top:388.60px;width:19px;color:#444;font-size:7.2px;letter-spacing:0">142</div>
<div class="ab" style="left:0;top:398.80px;width:19px;height:0.7px;background:#dcdcdc"></div>
<div class="c ct" style="left:0.6px;top:399.60px;width:19px;color:#444;font-size:7.2px;letter-spacing:0">143</div>
<div class="ab" style="left:0;top:409.80px;width:19px;height:0.7px;background:#dcdcdc"></div>
<div class="c ct" style="left:0.6px;top:410.60px;width:19px;color:#444;font-size:7.2px;letter-spacing:0">144</div>
<div class="ab" style="left:0;top:420.80px;width:19px;height:0.7px;background:#dcdcdc"></div>
<div class="c ct" style="left:0.6px;top:421.60px;width:19px;color:#444;font-size:7.2px;letter-spacing:0">145</div>
<div class="ab" style="left:0;top:431.80px;width:19px;height:0.7px;background:#dcdcdc"></div>
<div class="c ct" style="left:0.6px;top:432.60px;width:19px;color:#444;font-size:7.2px;letter-spacing:0">146</div>
<div class="ab" style="left:0;top:442.80px;width:19px;height:0.7px;background:#dcdcdc"></div>
<div class="c ct" style="left:0.6px;top:443.60px;width:19px;color:#444;font-size:7.2px;letter-spacing:0">147</div>
<div class="ab" style="left:0;top:453.80px;width:19px;height:0.7px;background:#dcdcdc"></div>
<div class="c ct" style="left:0.6px;top:454.60px;width:19px;color:#444;font-size:7.2px;letter-spacing:0">148</div>
<div class="ab" style="left:0;top:464.80px;width:19px;height:0.7px;background:#dcdcdc"></div>
<div class="c ct" style="left:0.6px;top:465.60px;width:19px;color:#444;font-size:7.2px;letter-spacing:0">149</div>
<div class="ab" style="left:0;top:475.80px;width:19px;height:0.7px;background:#dcdcdc"></div>
<div class="c ct" style="left:0.6px;top:476.60px;width:19px;color:#444;font-size:7.2px;letter-spacing:0">150</div>
<div class="ab" style="left:0;top:486.80px;width:19px;height:0.7px;background:#dcdcdc"></div>
<div class="c ct" style="left:0.6px;top:487.60px;width:19px;color:#444;font-size:7.2px;letter-spacing:0">151</div>
<div class="ab" style="left:0;top:497.80px;width:19px;height:0.7px;background:#dcdcdc"></div>
<div class="c ct" style="left:0.6px;top:498.60px;width:19px;color:#444;font-size:7.2px;letter-spacing:0">152</div>
<div class="ab" style="left:0;top:508.80px;width:19px;height:0.7px;background:#dcdcdc"></div>
<div class="c ct" style="left:0.6px;top:509.60px;width:19px;color:#444;font-size:7.2px;letter-spacing:0">153</div>
<div class="ab" style="left:0;top:519.80px;width:19px;height:0.7px;background:#dcdcdc"></div>
<div class="c ct" style="left:0.6px;top:520.60px;width:19px;color:#444;font-size:7.2px;letter-spacing:0">154</div>
<div class="ab" style="left:0;top:530.80px;width:19px;height:0.7px;background:#dcdcdc"></div>
<div class="c ct" style="left:0.6px;top:531.60px;width:19px;color:#444;font-size:7.2px;letter-spacing:0">155</div>
<div class="ab" style="left:0;top:541.80px;width:19px;height:0.7px;background:#dcdcdc"></div>
<div class="c ct" style="left:0.6px;top:542.60px;width:19px;color:#444;font-size:7.2px;letter-spacing:0">156</div>
<div class="ab" style="left:0;top:552.80px;width:19px;height:0.7px;background:#dcdcdc"></div>
<div class="c ct" style="left:0.6px;top:553.60px;width:19px;color:#444;font-size:7.2px;letter-spacing:0">157</div>
<div class="ab" style="left:0;top:563.80px;width:19px;height:0.7px;background:#dcdcdc"></div>
<div class="c ct" style="left:0.6px;top:564.60px;width:19px;color:#444;font-size:7.2px;letter-spacing:0">158</div>
<div class="ab" style="left:0;top:574.80px;width:19px;height:0.7px;background:#dcdcdc"></div>
<div class="c ct" style="left:0.6px;top:575.60px;width:19px;color:#444;font-size:7.2px;letter-spacing:0">159</div>
<div class="ab" style="left:0;top:585.80px;width:19px;height:0.7px;background:#dcdcdc"></div>
<div class="c ct" style="left:0.6px;top:586.60px;width:19px;color:#444;font-size:7.2px;letter-spacing:0">160</div>
<div class="ab" style="left:0;top:596.80px;width:19px;height:0.7px;background:#dcdcdc"></div>
<div class="c ct" style="left:0.6px;top:597.60px;width:19px;color:#444;font-size:7.2px;letter-spacing:0">161</div>
<div class="ab" style="left:0;top:607.80px;width:19px;height:0.7px;background:#dcdcdc"></div>
<div class="c ct" style="left:0.6px;top:608.60px;width:19px;color:#444;font-size:7.2px;letter-spacing:0">162</div>
<div class="ab" style="left:0;top:618.80px;width:19px;height:0.7px;background:#dcdcdc"></div>
<div class="c ct" style="left:0.6px;top:619.60px;width:19px;color:#444;font-size:7.2px;letter-spacing:0">163</div>
<div class="ab" style="left:0;top:629.80px;width:19px;height:0.7px;background:#dcdcdc"></div>
<div class="c ct" style="left:0.6px;top:630.60px;width:19px;color:#444;font-size:7.2px;letter-spacing:0">164</div>
<div class="ab" style="left:0;top:640.80px;width:19px;height:0.7px;background:#dcdcdc"></div>
<div class="c ct" style="left:0.6px;top:641.60px;width:19px;color:#444;font-size:7.2px;letter-spacing:0">165</div>
<div class="ab" style="left:0;top:651.80px;width:19px;height:0.7px;background:#dcdcdc"></div>
<div class="c ct" style="left:0.6px;top:652.60px;width:19px;color:#444;font-size:7.2px;letter-spacing:0">166</div>
<div class="ab" style="left:0;top:662.80px;width:19px;height:0.7px;background:#dcdcdc"></div>
<div class="c ct" style="left:0.6px;top:663.60px;width:19px;color:#444;font-size:7.2px;letter-spacing:0">167</div>
<div class="ab" style="left:0;top:673.80px;width:19px;height:0.7px;background:#dcdcdc"></div>
<div class="ab" style="left:19.5px;top:193.5px;width:1258px;height:11px;background:#0d64f5"></div>
<div class="ab" style="left:338.1px;top:237.5px;width:938.9px;height:11px;background:#c4edcf"></div>
<div class="ab" style="left:338.1px;top:248.5px;width:938.9px;height:10.5px;background:#fdc6cd"></div>
<div class="ab" style="left:337.2px;top:176px;width:1px;height:501px;background:#8f8f8f"></div>
<div class="ab" style="left:0;top:258.8px;width:1277px;height:1px;background:#8f8f8f"></div>
<div class="c" style="left:32px;top:215.90px;color:#000;">Date</div>
<div class="c" style="left:32px;top:226.90px;color:#000;">Cash flow date</div>
<div class="c" style="left:32px;top:237.90px;color:#000;">Holding period</div>
<div class="c" style="left:32px;top:248.90px;color:#000;">Exit period</div>
<div class="c rt" style="left:266.50px;top:215.90px;width:69.90px;color:#2d8a3e;">01-Oct-15</div>
<div class="c rt" style="left:266.50px;top:226.90px;width:69.90px;color:#000;">01-Oct-15</div>
<div class="c rt" style="left:337.60px;top:215.90px;width:70.27px;color:#000;">01-Jan-16</div>
<div class="c rt" style="left:337.60px;top:226.90px;width:70.27px;color:#000;">16-Nov-15</div>
<div class="c ct" style="left:338.90px;top:237.90px;width:71.07px;color:#2a7a3a">TRUE</div>
<div class="c ct" style="left:338.90px;top:248.90px;width:71.07px;color:#a01525">FALSE</div>
<div class="c rt" style="left:408.67px;top:215.90px;width:70.27px;color:#000;">01-Apr-16</div>
<div class="c rt" style="left:408.67px;top:226.90px;width:70.27px;color:#000;">15-Feb-16</div>
<div class="c ct" style="left:409.97px;top:237.90px;width:71.07px;color:#2a7a3a">TRUE</div>
<div class="c ct" style="left:409.97px;top:248.90px;width:71.07px;color:#a01525">FALSE</div>
<div class="c rt" style="left:479.74px;top:215.90px;width:70.27px;color:#000;">01-Jul-16</div>
<div class="c rt" style="left:479.74px;top:226.90px;width:70.27px;color:#000;">16-May-16</div>
<div class="c ct" style="left:481.04px;top:237.90px;width:71.07px;color:#2a7a3a">TRUE</div>
<div class="c ct" style="left:481.04px;top:248.90px;width:71.07px;color:#a01525">FALSE</div>
<div class="c rt" style="left:550.81px;top:215.90px;width:70.27px;color:#000;">01-Oct-16</div>
<div class="c rt" style="left:550.81px;top:226.90px;width:70.27px;color:#000;">16-Aug-16</div>
<div class="c ct" style="left:552.11px;top:237.90px;width:71.07px;color:#2a7a3a">TRUE</div>
<div class="c ct" style="left:552.11px;top:248.90px;width:71.07px;color:#a01525">FALSE</div>
<div class="c rt" style="left:621.88px;top:215.90px;width:70.27px;color:#000;">01-Jan-17</div>
<div class="c rt" style="left:621.88px;top:226.90px;width:70.27px;color:#000;">16-Nov-16</div>
<div class="c ct" style="left:623.18px;top:237.90px;width:71.07px;color:#2a7a3a">TRUE</div>
<div class="c ct" style="left:623.18px;top:248.90px;width:71.07px;color:#a01525">FALSE</div>
<div class="c rt" style="left:692.95px;top:215.90px;width:70.27px;color:#000;">01-Apr-17</div>
<div class="c rt" style="left:692.95px;top:226.90px;width:70.27px;color:#000;">15-Feb-17</div>
<div class="c ct" style="left:694.25px;top:237.90px;width:71.07px;color:#2a7a3a">TRUE</div>
<div class="c ct" style="left:694.25px;top:248.90px;width:71.07px;color:#a01525">FALSE</div>
<div class="c rt" style="left:764.02px;top:215.90px;width:70.27px;color:#000;">01-Jul-17</div>
<div class="c rt" style="left:764.02px;top:226.90px;width:70.27px;color:#000;">16-May-17</div>
<div class="c ct" style="left:765.32px;top:237.90px;width:71.07px;color:#2a7a3a">TRUE</div>
<div class="c ct" style="left:765.32px;top:248.90px;width:71.07px;color:#a01525">FALSE</div>
<div class="c rt" style="left:835.08px;top:215.90px;width:70.27px;color:#000;">01-Oct-17</div>
<div class="c rt" style="left:835.08px;top:226.90px;width:70.27px;color:#000;">16-Aug-17</div>
<div class="c ct" style="left:836.38px;top:237.90px;width:71.07px;color:#2a7a3a">TRUE</div>
<div class="c ct" style="left:836.38px;top:248.90px;width:71.07px;color:#a01525">FALSE</div>
<div class="c rt" style="left:906.15px;top:215.90px;width:70.27px;color:#000;">01-Jan-18</div>
<div class="c rt" style="left:906.15px;top:226.90px;width:70.27px;color:#000;">16-Nov-17</div>
<div class="c ct" style="left:907.45px;top:237.90px;width:71.07px;color:#2a7a3a">TRUE</div>
<div class="c ct" style="left:907.45px;top:248.90px;width:71.07px;color:#a01525">FALSE</div>
<div class="c rt" style="left:977.22px;top:215.90px;width:70.27px;color:#000;">01-Apr-18</div>
<div class="c rt" style="left:977.22px;top:226.90px;width:70.27px;color:#000;">15-Feb-18</div>
<div class="c ct" style="left:978.52px;top:237.90px;width:71.07px;color:#2a7a3a">TRUE</div>
<div class="c ct" style="left:978.52px;top:248.90px;width:71.07px;color:#a01525">FALSE</div>
<div class="c rt" style="left:1048.29px;top:215.90px;width:70.27px;color:#000;">01-Jul-18</div>
<div class="c rt" style="left:1048.29px;top:226.90px;width:70.27px;color:#000;">16-May-18</div>
<div class="c ct" style="left:1049.59px;top:237.90px;width:71.07px;color:#2a7a3a">TRUE</div>
<div class="c ct" style="left:1049.59px;top:248.90px;width:71.07px;color:#a01525">FALSE</div>
<div class="c rt" style="left:1119.36px;top:215.90px;width:70.27px;color:#000;">01-Oct-18</div>
<div class="c rt" style="left:1119.36px;top:226.90px;width:70.27px;color:#000;">16-Aug-18</div>
<div class="c ct" style="left:1120.66px;top:237.90px;width:71.07px;color:#2a7a3a">TRUE</div>
<div class="c ct" style="left:1120.66px;top:248.90px;width:71.07px;color:#a01525">FALSE</div>
<div class="c rt" style="left:1190.43px;top:215.90px;width:70.27px;color:#000;">01-Jan-19</div>
<div class="c rt" style="left:1190.43px;top:226.90px;width:70.27px;color:#000;">16-Nov-18</div>
<div class="c ct" style="left:1191.73px;top:237.90px;width:71.07px;color:#2a7a3a">TRUE</div>
<div class="c ct" style="left:1191.73px;top:248.90px;width:71.07px;color:#a01525">FALSE</div>
<div class="c" style="left:32px;top:267.70px;color:#000;">Capitalizing Debt</div>
<div class="c" style="left:43px;top:278.70px;color:#000;">opening balance</div>
<div class="c" style="left:43px;top:289.70px;color:#000;">add: capitalizing interest</div>
<div class="c" style="left:43px;top:300.70px;color:#000;">less: scheduled repayment</div>
<div class="c" style="left:43px;top:311.70px;color:#e8161e;">less: cashflow sweep</div>
<div class="c" style="left:43px;top:322.70px;color:#000;">closing balance</div>
<div class="c" style="left:43px;top:333.70px;color:#000;">Capitalising Debt Test</div>
<div class="c" style="left:43px;top:355.70px;color:#000;">Elbor</div>
<div class="c" style="left:43px;top:366.70px;color:#000;">Credit spread</div>
<div class="c" style="left:43px;top:377.70px;color:#000;">Total annual rate</div>
<div class="c" style="left:43px;top:388.70px;color:#000;">Periodic rate</div>
<div class="c" style="left:43px;top:399.70px;color:#000;">Intererest Expense</div>
<div class="c" style="left:32px;top:421.70px;color:#000;">Revolving debt</div>
<div class="c" style="left:43px;top:432.70px;color:#000;">Total debt commitment</div>
<div class="c" style="left:43px;top:443.70px;color:#000;">less: amount borrowed</div>
<div class="c" style="left:43px;top:454.70px;color:#000;">remaining amount to borrow</div>
<div class="c" style="left:43px;top:476.70px;color:#000;">Periodic Commitment Fee</div>
<div class="c" style="left:43px;top:498.70px;color:#000;">opening balance</div>
<div class="c" style="left:43px;top:509.70px;color:#e8161e;">add: drawings</div>
<div class="c" style="left:43px;top:520.70px;color:#e8161e;">less: repayments</div>
<div class="c" style="left:43px;top:531.70px;color:#000;">closing balance</div>
<div class="c" style="left:43px;top:542.70px;color:#000;">Revolver Test</div>
<div class="c" style="left:43px;top:564.70px;color:#000;">Elbor</div>
<div class="c" style="left:43px;top:575.70px;color:#000;">Credit spread</div>
<div class="c" style="left:43px;top:586.70px;color:#000;">Total annual rate</div>
<div class="c" style="left:43px;top:597.70px;color:#000;">Periodic rate</div>
<div class="c" style="left:43px;top:608.70px;color:#000;">Interest Expense</div>
<div class="c" style="left:32px;top:630.70px;color:#000;">Defaulted debt</div>
<div class="c" style="left:43px;top:641.70px;color:#000;">opening balance</div>
<div class="c" style="left:43px;top:652.70px;color:#e8161e;">add: defaults</div>
<div class="c" style="left:43px;top:663.70px;color:#e8161e;">less: repayments of default</div>
<div class="c rt" style="left:337.60px;top:278.70px;width:70.67px;color:#000;">40.00</div>
<div class="c rt" style="left:408.67px;top:278.70px;width:70.67px;color:#000;">40.81</div>
<div class="c rt" style="left:479.74px;top:278.70px;width:70.67px;color:#000;">41.64</div>
<div class="c rt" style="left:550.81px;top:278.70px;width:70.67px;color:#000;">42.48</div>
<div class="c rt" style="left:621.88px;top:278.70px;width:70.67px;color:#000;">43.34</div>
<div class="c rt" style="left:692.95px;top:278.70px;width:70.67px;color:#000;">44.22</div>
<div class="c rt" style="left:764.02px;top:278.70px;width:70.67px;color:#000;">45.11</div>
<div class="c rt" style="left:835.08px;top:278.70px;width:70.67px;color:#000;">46.03</div>
<div class="c rt" style="left:906.15px;top:278.70px;width:70.67px;color:#000;">46.96</div>
<div class="c rt" style="left:977.22px;top:278.70px;width:70.67px;color:#000;">47.91</div>
<div class="c rt" style="left:1048.29px;top:278.70px;width:70.67px;color:#000;">48.88</div>
<div class="c rt" style="left:1119.36px;top:278.70px;width:70.67px;color:#000;">49.87</div>
<div class="c rt" style="left:1190.43px;top:278.70px;width:70.67px;color:#000;">50.88</div>
<div class="c rt" style="left:337.60px;top:289.70px;width:70.67px;color:#000;">0.81</div>
<div class="c rt" style="left:408.67px;top:289.70px;width:70.67px;color:#000;">0.83</div>
<div class="c rt" style="left:479.74px;top:289.70px;width:70.67px;color:#000;">0.84</div>
<div class="c rt" style="left:550.81px;top:289.70px;width:70.67px;color:#000;">0.86</div>
<div class="c rt" style="left:621.88px;top:289.70px;width:70.67px;color:#000;">0.88</div>
<div class="c rt" style="left:692.95px;top:289.70px;width:70.67px;color:#000;">0.90</div>
<div class="c rt" style="left:764.02px;top:289.70px;width:70.67px;color:#000;">0.91</div>
<div class="c rt" style="left:835.08px;top:289.70px;width:70.67px;color:#000;">0.93</div>
<div class="c rt" style="left:906.15px;top:289.70px;width:70.67px;color:#000;">0.95</div>
<div class="c rt" style="left:977.22px;top:289.70px;width:70.67px;color:#000;">0.97</div>
<div class="c rt" style="left:1048.29px;top:289.70px;width:70.67px;color:#000;">0.99</div>
<div class="c rt" style="left:1119.36px;top:289.70px;width:70.67px;color:#000;">1.01</div>
<div class="c rt" style="left:1190.43px;top:289.70px;width:70.67px;color:#000;">1.03</div>
<div class="c rt" style="left:337.60px;top:300.70px;width:70.67px;color:#000;">0.00</div>
<div class="c rt" style="left:408.67px;top:300.70px;width:70.67px;color:#000;">0.00</div>
<div class="c rt" style="left:479.74px;top:300.70px;width:70.67px;color:#000;">0.00</div>
<div class="c rt" style="left:550.81px;top:300.70px;width:70.67px;color:#000;">0.00</div>
<div class="c rt" style="left:621.88px;top:300.70px;width:70.67px;color:#000;">0.00</div>
<div class="c rt" style="left:692.95px;top:300.70px;width:70.67px;color:#000;">0.00</div>
<div class="c rt" style="left:764.02px;top:300.70px;width:70.67px;color:#000;">0.00</div>
<div class="c rt" style="left:835.08px;top:300.70px;width:70.67px;color:#000;">0.00</div>
<div class="c rt" style="left:906.15px;top:300.70px;width:70.67px;color:#000;">0.00</div>
<div class="c rt" style="left:977.22px;top:300.70px;width:70.67px;color:#000;">0.00</div>
<div class="c rt" style="left:1048.29px;top:300.70px;width:70.67px;color:#000;">0.00</div>
<div class="c rt" style="left:1119.36px;top:300.70px;width:70.67px;color:#000;">0.00</div>
<div class="c rt" style="left:1190.43px;top:300.70px;width:70.67px;color:#000;">0.00</div>
<div class="c rt" style="left:337.60px;top:322.70px;width:70.67px;color:#000;">40.81</div>
<div class="c rt" style="left:408.67px;top:322.70px;width:70.67px;color:#000;">41.64</div>
<div class="c rt" style="left:479.74px;top:322.70px;width:70.67px;color:#000;">42.48</div>
<div class="c rt" style="left:550.81px;top:322.70px;width:70.67px;color:#000;">43.34</div>
<div class="c rt" style="left:621.88px;top:322.70px;width:70.67px;color:#000;">44.22</div>
<div class="c rt" style="left:692.95px;top:322.70px;width:70.67px;color:#000;">45.11</div>
<div class="c rt" style="left:764.02px;top:322.70px;width:70.67px;color:#000;">46.03</div>
<div class="c rt" style="left:835.08px;top:322.70px;width:70.67px;color:#000;">46.96</div>
<div class="c rt" style="left:906.15px;top:322.70px;width:70.67px;color:#000;">47.91</div>
<div class="c rt" style="left:977.22px;top:322.70px;width:70.67px;color:#000;">48.88</div>
<div class="c rt" style="left:1048.29px;top:322.70px;width:70.67px;color:#000;">49.87</div>
<div class="c rt" style="left:1119.36px;top:322.70px;width:70.67px;color:#000;">50.88</div>
<div class="c rt" style="left:1190.43px;top:322.70px;width:70.67px;color:#000;">51.91</div>
<div class="c rt" style="left:337.60px;top:355.70px;width:71.07px;color:#000;">1.10%</div>
<div class="c rt" style="left:408.67px;top:355.70px;width:71.07px;color:#000;">1.10%</div>
<div class="c rt" style="left:479.74px;top:355.70px;width:71.07px;color:#000;">1.10%</div>
<div class="c rt" style="left:550.81px;top:355.70px;width:71.07px;color:#000;">1.10%</div>
<div class="c rt" style="left:621.88px;top:355.70px;width:71.07px;color:#000;">1.10%</div>
<div class="c rt" style="left:692.95px;top:355.70px;width:71.07px;color:#000;">1.10%</div>
<div class="c rt" style="left:764.02px;top:355.70px;width:71.07px;color:#000;">1.10%</div>
<div class="c rt" style="left:835.08px;top:355.70px;width:71.07px;color:#000;">1.10%</div>
<div class="c rt" style="left:906.15px;top:355.70px;width:71.07px;color:#000;">1.10%</div>
<div class="c rt" style="left:977.22px;top:355.70px;width:71.07px;color:#000;">1.10%</div>
<div class="c rt" style="left:1048.29px;top:355.70px;width:71.07px;color:#000;">1.10%</div>
<div class="c rt" style="left:1119.36px;top:355.70px;width:71.07px;color:#000;">1.10%</div>
<div class="c rt" style="left:1190.43px;top:355.70px;width:71.07px;color:#000;">1.10%</div>
<div class="c rt" style="left:337.60px;top:377.70px;width:71.07px;color:#000;">8.10%</div>
<div class="c rt" style="left:408.67px;top:377.70px;width:71.07px;color:#000;">8.10%</div>
<div class="c rt" style="left:479.74px;top:377.70px;width:71.07px;color:#000;">8.10%</div>
<div class="c rt" style="left:550.81px;top:377.70px;width:71.07px;color:#000;">8.10%</div>
<div class="c rt" style="left:621.88px;top:377.70px;width:71.07px;color:#000;">8.10%</div>
<div class="c rt" style="left:692.95px;top:377.70px;width:71.07px;color:#000;">8.10%</div>
<div class="c rt" style="left:764.02px;top:377.70px;width:71.07px;color:#000;">8.10%</div>
<div class="c rt" style="left:835.08px;top:377.70px;width:71.07px;color:#000;">8.10%</div>
<div class="c rt" style="left:906.15px;top:377.70px;width:71.07px;color:#000;">8.10%</div>
<div class="c rt" style="left:977.22px;top:377.70px;width:71.07px;color:#000;">8.10%</div>
<div class="c rt" style="left:1048.29px;top:377.70px;width:71.07px;color:#000;">8.10%</div>
<div class="c rt" style="left:1119.36px;top:377.70px;width:71.07px;color:#000;">8.10%</div>
<div class="c rt" style="left:1190.43px;top:377.70px;width:71.07px;color:#000;">8.10%</div>
<div class="c rt" style="left:337.60px;top:388.70px;width:71.07px;color:#000;">2.03%</div>
<div class="c rt" style="left:408.67px;top:388.70px;width:71.07px;color:#000;">2.03%</div>
<div class="c rt" style="left:479.74px;top:388.70px;width:71.07px;color:#000;">2.03%</div>
<div class="c rt" style="left:550.81px;top:388.70px;width:71.07px;color:#000;">2.03%</div>
<div class="c rt" style="left:621.88px;top:388.70px;width:71.07px;color:#000;">2.03%</div>
<div class="c rt" style="left:692.95px;top:388.70px;width:71.07px;color:#000;">2.03%</div>
<div class="c rt" style="left:764.02px;top:388.70px;width:71.07px;color:#000;">2.03%</div>
<div class="c rt" style="left:835.08px;top:388.70px;width:71.07px;color:#000;">2.03%</div>
<div class="c rt" style="left:906.15px;top:388.70px;width:71.07px;color:#000;">2.03%</div>
<div class="c rt" style="left:977.22px;top:388.70px;width:71.07px;color:#000;">2.03%</div>
<div class="c rt" style="left:1048.29px;top:388.70px;width:71.07px;color:#000;">2.03%</div>
<div class="c rt" style="left:1119.36px;top:388.70px;width:71.07px;color:#000;">2.03%</div>
<div class="c rt" style="left:1190.43px;top:388.70px;width:71.07px;color:#000;">2.03%</div>
<div class="c rt" style="left:337.60px;top:399.70px;width:70.67px;color:#000;">0.81</div>
<div class="c rt" style="left:408.67px;top:399.70px;width:70.67px;color:#000;">0.83</div>
<div class="c rt" style="left:479.74px;top:399.70px;width:70.67px;color:#000;">0.84</div>
<div class="c rt" style="left:550.81px;top:399.70px;width:70.67px;color:#000;">0.86</div>
<div class="c rt" style="left:621.88px;top:399.70px;width:70.67px;color:#000;">0.88</div>
<div class="c rt" style="left:692.95px;top:399.70px;width:70.67px;color:#000;">0.90</div>
<div class="c rt" style="left:764.02px;top:399.70px;width:70.67px;color:#000;">0.91</div>
<div class="c rt" style="left:835.08px;top:399.70px;width:70.67px;color:#000;">0.93</div>
<div class="c rt" style="left:906.15px;top:399.70px;width:70.67px;color:#000;">0.95</div>
<div class="c rt" style="left:977.22px;top:399.70px;width:70.67px;color:#000;">0.97</div>
<div class="c rt" style="left:1048.29px;top:399.70px;width:70.67px;color:#000;">0.99</div>
<div class="c rt" style="left:1119.36px;top:399.70px;width:70.67px;color:#000;">1.01</div>
<div class="c rt" style="left:1190.43px;top:399.70px;width:70.67px;color:#000;">1.03</div>
<div class="c rt" style="left:337.60px;top:443.70px;width:70.67px;color:#000;">0.00</div>
<div class="c rt" style="left:408.67px;top:443.70px;width:70.67px;color:#000;">0.00</div>
<div class="c rt" style="left:479.74px;top:443.70px;width:70.67px;color:#000;">0.13</div>
<div class="c rt" style="left:550.81px;top:443.70px;width:70.67px;color:#000;">0.09</div>
<div class="c rt" style="left:621.88px;top:443.70px;width:70.67px;color:#000;">0.00</div>
<div class="c rt" style="left:692.95px;top:443.70px;width:70.67px;color:#000;">0.25</div>
<div class="c rt" style="left:764.02px;top:443.70px;width:70.67px;color:#000;">0.00</div>
<div class="c rt" style="left:835.08px;top:443.70px;width:70.67px;color:#000;">0.00</div>
<div class="c rt" style="left:906.15px;top:443.70px;width:70.67px;color:#000;">0.00</div>
<div class="c rt" style="left:977.22px;top:443.70px;width:70.67px;color:#000;">0.00</div>
<div class="c rt" style="left:1048.29px;top:443.70px;width:70.67px;color:#000;">0.00</div>
<div class="c rt" style="left:1119.36px;top:443.70px;width:70.67px;color:#000;">0.00</div>
<div class="c rt" style="left:1190.43px;top:443.70px;width:70.67px;color:#000;">0.00</div>
<div class="c rt" style="left:337.60px;top:454.70px;width:70.67px;color:#000;">44.00</div>
<div class="c rt" style="left:408.67px;top:454.70px;width:70.67px;color:#000;">44.00</div>
<div class="c rt" style="left:479.74px;top:454.70px;width:70.67px;color:#000;">43.87</div>
<div class="c rt" style="left:550.81px;top:454.70px;width:70.67px;color:#000;">43.91</div>
<div class="c rt" style="left:621.88px;top:454.70px;width:70.67px;color:#000;">44.00</div>
<div class="c rt" style="left:692.95px;top:454.70px;width:70.67px;color:#000;">43.75</div>
<div class="c rt" style="left:764.02px;top:454.70px;width:70.67px;color:#000;">44.00</div>
<div class="c rt" style="left:835.08px;top:454.70px;width:70.67px;color:#000;">44.00</div>
<div class="c rt" style="left:906.15px;top:454.70px;width:70.67px;color:#000;">44.00</div>
<div class="c rt" style="left:977.22px;top:454.70px;width:70.67px;color:#000;">44.00</div>
<div class="c rt" style="left:1048.29px;top:454.70px;width:70.67px;color:#000;">44.00</div>
<div class="c rt" style="left:1119.36px;top:454.70px;width:70.67px;color:#000;">44.00</div>
<div class="c rt" style="left:1190.43px;top:454.70px;width:70.67px;color:#000;">44.00</div>
<div class="c rt" style="left:337.60px;top:476.70px;width:70.67px;color:#000;">0.22</div>
<div class="c rt" style="left:408.67px;top:476.70px;width:70.67px;color:#000;">0.22</div>
<div class="c rt" style="left:479.74px;top:476.70px;width:70.67px;color:#000;">0.22</div>
<div class="c rt" style="left:550.81px;top:476.70px;width:70.67px;color:#000;">0.22</div>
<div class="c rt" style="left:621.88px;top:476.70px;width:70.67px;color:#000;">0.22</div>
<div class="c rt" style="left:692.95px;top:476.70px;width:70.67px;color:#000;">0.22</div>
<div class="c rt" style="left:764.02px;top:476.70px;width:70.67px;color:#000;">0.22</div>
<div class="c rt" style="left:835.08px;top:476.70px;width:70.67px;color:#000;">0.22</div>
<div class="c rt" style="left:906.15px;top:476.70px;width:70.67px;color:#000;">0.22</div>
<div class="c rt" style="left:977.22px;top:476.70px;width:70.67px;color:#000;">0.22</div>
<div class="c rt" style="left:1048.29px;top:476.70px;width:70.67px;color:#000;">0.22</div>
<div class="c rt" style="left:1119.36px;top:476.70px;width:70.67px;color:#000;">0.22</div>
<div class="c rt" style="left:1190.43px;top:476.70px;width:70.67px;color:#000;">0.22</div>
<div class="c rt" style="left:337.60px;top:498.70px;width:70.67px;color:#000;">0.00</div>
<div class="c rt" style="left:408.67px;top:498.70px;width:70.67px;color:#000;">0.00</div>
<div class="c rt" style="left:479.74px;top:498.70px;width:70.67px;color:#000;">0.13</div>
<div class="c rt" style="left:550.81px;top:498.70px;width:70.67px;color:#000;">0.09</div>
<div class="c rt" style="left:621.88px;top:498.70px;width:70.67px;color:#000;">0.00</div>
<div class="c rt" style="left:692.95px;top:498.70px;width:70.67px;color:#000;">0.25</div>
<div class="c rt" style="left:764.02px;top:498.70px;width:70.67px;color:#000;">0.00</div>
<div class="c rt" style="left:835.08px;top:498.70px;width:70.67px;color:#000;">0.00</div>
<div class="c rt" style="left:906.15px;top:498.70px;width:70.67px;color:#000;">0.00</div>
<div class="c rt" style="left:977.22px;top:498.70px;width:70.67px;color:#000;">0.00</div>
<div class="c rt" style="left:1048.29px;top:498.70px;width:70.67px;color:#000;">0.00</div>
<div class="c rt" style="left:1119.36px;top:498.70px;width:70.67px;color:#000;">0.00</div>
<div class="c rt" style="left:1190.43px;top:498.70px;width:70.67px;color:#000;">0.00</div>
<div class="c rt" style="left:337.60px;top:509.70px;width:70.67px;color:#000;">0.00</div>
<div class="c rt" style="left:408.67px;top:509.70px;width:70.67px;color:#000;">0.13</div>
<div class="c rt" style="left:479.74px;top:509.70px;width:70.67px;color:#000;">0.00</div>
<div class="c rt" style="left:550.81px;top:509.70px;width:70.67px;color:#000;">0.00</div>
<div class="c rt" style="left:621.88px;top:509.70px;width:70.67px;color:#000;">0.25</div>
<div class="c rt" style="left:692.95px;top:509.70px;width:70.67px;color:#000;">0.00</div>
<div class="c rt" style="left:764.02px;top:509.70px;width:70.67px;color:#000;">0.00</div>
<div class="c rt" style="left:835.08px;top:509.70px;width:70.67px;color:#000;">0.00</div>
<div class="c rt" style="left:906.15px;top:509.70px;width:70.67px;color:#000;">0.00</div>
<div class="c rt" style="left:977.22px;top:509.70px;width:70.67px;color:#000;">0.00</div>
<div class="c rt" style="left:1048.29px;top:509.70px;width:70.67px;color:#000;">0.00</div>
<div class="c rt" style="left:1119.36px;top:509.70px;width:70.67px;color:#000;">0.00</div>
<div class="c rt" style="left:1190.43px;top:509.70px;width:70.67px;color:#000;">0.00</div>
<div class="c rt" style="left:337.60px;top:520.70px;width:70.67px;color:#000;">0.00</div>
<div class="c rt" style="left:408.67px;top:520.70px;width:70.67px;color:#000;">0.00</div>
<div class="c rt" style="left:479.74px;top:520.70px;width:70.67px;color:#000;">0.04</div>
<div class="c rt" style="left:550.81px;top:520.70px;width:70.67px;color:#000;">0.09</div>
<div class="c rt" style="left:621.88px;top:520.70px;width:70.67px;color:#000;">0.00</div>
<div class="c rt" style="left:692.95px;top:520.70px;width:70.67px;color:#000;">0.25</div>
<div class="c rt" style="left:764.02px;top:520.70px;width:70.67px;color:#000;">0.00</div>
<div class="c rt" style="left:835.08px;top:520.70px;width:70.67px;color:#000;">0.00</div>
<div class="c rt" style="left:906.15px;top:520.70px;width:70.67px;color:#000;">0.00</div>
<div class="c rt" style="left:977.22px;top:520.70px;width:70.67px;color:#000;">0.00</div>
<div class="c rt" style="left:1048.29px;top:520.70px;width:70.67px;color:#000;">0.00</div>
<div class="c rt" style="left:1119.36px;top:520.70px;width:70.67px;color:#000;">0.00</div>
<div class="c rt" style="left:1190.43px;top:520.70px;width:70.67px;color:#000;">0.00</div>
<div class="c rt" style="left:337.60px;top:531.70px;width:70.67px;color:#000;">0.00</div>
<div class="c rt" style="left:408.67px;top:531.70px;width:70.67px;color:#000;">0.13</div>
<div class="c rt" style="left:479.74px;top:531.70px;width:70.67px;color:#000;">0.09</div>
<div class="c rt" style="left:550.81px;top:531.70px;width:70.67px;color:#000;">0.00</div>
<div class="c rt" style="left:621.88px;top:531.70px;width:70.67px;color:#000;">0.25</div>
<div class="c rt" style="left:692.95px;top:531.70px;width:70.67px;color:#000;">0.00</div>
<div class="c rt" style="left:764.02px;top:531.70px;width:70.67px;color:#000;">0.00</div>
<div class="c rt" style="left:835.08px;top:531.70px;width:70.67px;color:#000;">0.00</div>
<div class="c rt" style="left:906.15px;top:531.70px;width:70.67px;color:#000;">0.00</div>
<div class="c rt" style="left:977.22px;top:531.70px;width:70.67px;color:#000;">0.00</div>
<div class="c rt" style="left:1048.29px;top:531.70px;width:70.67px;color:#000;">0.00</div>
<div class="c rt" style="left:1119.36px;top:531.70px;width:70.67px;color:#000;">0.00</div>
<div class="c rt" style="left:1190.43px;top:531.70px;width:70.67px;color:#000;">0.00</div>
<div class="c rt" style="left:337.60px;top:564.70px;width:71.07px;color:#000;">1.10%</div>
<div class="c rt" style="left:408.67px;top:564.70px;width:71.07px;color:#000;">1.10%</div>
<div class="c rt" style="left:479.74px;top:564.70px;width:71.07px;color:#000;">1.10%</div>
<div class="c rt" style="left:550.81px;top:564.70px;width:71.07px;color:#000;">1.10%</div>
<div class="c rt" style="left:621.88px;top:564.70px;width:71.07px;color:#000;">1.10%</div>
<div class="c rt" style="left:692.95px;top:564.70px;width:71.07px;color:#000;">1.10%</div>
<div class="c rt" style="left:764.02px;top:564.70px;width:71.07px;color:#000;">1.10%</div>
<div class="c rt" style="left:835.08px;top:564.70px;width:71.07px;color:#000;">1.10%</div>
<div class="c rt" style="left:906.15px;top:564.70px;width:71.07px;color:#000;">1.10%</div>
<div class="c rt" style="left:977.22px;top:564.70px;width:71.07px;color:#000;">1.10%</div>
<div class="c rt" style="left:1048.29px;top:564.70px;width:71.07px;color:#000;">1.10%</div>
<div class="c rt" style="left:1119.36px;top:564.70px;width:71.07px;color:#000;">1.10%</div>
<div class="c rt" style="left:1190.43px;top:564.70px;width:71.07px;color:#000;">1.10%</div>
<div class="c rt" style="left:337.60px;top:575.70px;width:70.67px;color:#000;">0.025</div>
<div class="c rt" style="left:408.67px;top:575.70px;width:70.67px;color:#000;">0.025</div>
<div class="c rt" style="left:479.74px;top:575.70px;width:70.67px;color:#000;">0.025</div>
<div class="c rt" style="left:550.81px;top:575.70px;width:70.67px;color:#000;">0.025</div>
<div class="c rt" style="left:621.88px;top:575.70px;width:70.67px;color:#000;">0.025</div>
<div class="c rt" style="left:692.95px;top:575.70px;width:70.67px;color:#000;">0.015</div>
<div class="c rt" style="left:764.02px;top:575.70px;width:70.67px;color:#000;">0.015</div>
<div class="c rt" style="left:835.08px;top:575.70px;width:70.67px;color:#000;">0.015</div>
<div class="c rt" style="left:906.15px;top:575.70px;width:70.67px;color:#000;">0.015</div>
<div class="c rt" style="left:977.22px;top:575.70px;width:70.67px;color:#000;">0.015</div>
<div class="c rt" style="left:1048.29px;top:575.70px;width:70.67px;color:#000;">0.015</div>
<div class="c rt" style="left:1119.36px;top:575.70px;width:70.67px;color:#000;">0.015</div>
<div class="c rt" style="left:1190.43px;top:575.70px;width:70.67px;color:#000;">0.01</div>
<div class="c rt" style="left:337.60px;top:586.70px;width:71.07px;color:#000;">3.60%</div>
<div class="c rt" style="left:408.67px;top:586.70px;width:71.07px;color:#000;">3.60%</div>
<div class="c rt" style="left:479.74px;top:586.70px;width:71.07px;color:#000;">3.60%</div>
<div class="c rt" style="left:550.81px;top:586.70px;width:71.07px;color:#000;">3.60%</div>
<div class="c rt" style="left:621.88px;top:586.70px;width:71.07px;color:#000;">3.60%</div>
<div class="c rt" style="left:692.95px;top:586.70px;width:71.07px;color:#000;">2.60%</div>
<div class="c rt" style="left:764.02px;top:586.70px;width:71.07px;color:#000;">2.60%</div>
<div class="c rt" style="left:835.08px;top:586.70px;width:71.07px;color:#000;">2.60%</div>
<div class="c rt" style="left:906.15px;top:586.70px;width:71.07px;color:#000;">2.60%</div>
<div class="c rt" style="left:977.22px;top:586.70px;width:71.07px;color:#000;">2.60%</div>
<div class="c rt" style="left:1048.29px;top:586.70px;width:71.07px;color:#000;">2.60%</div>
<div class="c rt" style="left:1119.36px;top:586.70px;width:71.07px;color:#000;">2.60%</div>
<div class="c rt" style="left:1190.43px;top:586.70px;width:71.07px;color:#000;">2.10%</div>
<div class="c rt" style="left:337.60px;top:597.70px;width:71.07px;color:#000;">0.9000%</div>
<div class="c rt" style="left:408.67px;top:597.70px;width:71.07px;color:#000;">0.9000%</div>
<div class="c rt" style="left:479.74px;top:597.70px;width:71.07px;color:#000;">0.9000%</div>
<div class="c rt" style="left:550.81px;top:597.70px;width:71.07px;color:#000;">0.9000%</div>
<div class="c rt" style="left:621.88px;top:597.70px;width:71.07px;color:#000;">0.9000%</div>
<div class="c rt" style="left:692.95px;top:597.70px;width:71.07px;color:#000;">0.6500%</div>
<div class="c rt" style="left:764.02px;top:597.70px;width:71.07px;color:#000;">0.6500%</div>
<div class="c rt" style="left:835.08px;top:597.70px;width:71.07px;color:#000;">0.6500%</div>
<div class="c rt" style="left:906.15px;top:597.70px;width:71.07px;color:#000;">0.6500%</div>
<div class="c rt" style="left:977.22px;top:597.70px;width:71.07px;color:#000;">0.6500%</div>
<div class="c rt" style="left:1048.29px;top:597.70px;width:71.07px;color:#000;">0.6500%</div>
<div class="c rt" style="left:1119.36px;top:597.70px;width:71.07px;color:#000;">0.6500%</div>
<div class="c rt" style="left:1190.43px;top:597.70px;width:71.07px;color:#000;">0.5250%</div>
<div class="c rt" style="left:337.60px;top:608.70px;width:70.67px;color:#000;">0.00</div>
<div class="c rt" style="left:408.67px;top:608.70px;width:70.67px;color:#000;">0.00</div>
<div class="c rt" style="left:479.74px;top:608.70px;width:70.67px;color:#000;">0.00</div>
<div class="c rt" style="left:550.81px;top:608.70px;width:70.67px;color:#000;">0.00</div>
<div class="c rt" style="left:621.88px;top:608.70px;width:70.67px;color:#000;">0.00</div>
<div class="c rt" style="left:692.95px;top:608.70px;width:70.67px;color:#000;">0.00</div>
<div class="c rt" style="left:764.02px;top:608.70px;width:70.67px;color:#000;">0.00</div>
<div class="c rt" style="left:835.08px;top:608.70px;width:70.67px;color:#000;">0.00</div>
<div class="c rt" style="left:906.15px;top:608.70px;width:70.67px;color:#000;">0.00</div>
<div class="c rt" style="left:977.22px;top:608.70px;width:70.67px;color:#000;">0.00</div>
<div class="c rt" style="left:1048.29px;top:608.70px;width:70.67px;color:#000;">0.00</div>
<div class="c rt" style="left:1119.36px;top:608.70px;width:70.67px;color:#000;">0.00</div>
<div class="c rt" style="left:1190.43px;top:608.70px;width:70.67px;color:#000;">0.00</div>
<div class="c rt" style="left:337.60px;top:366.70px;width:71.07px;color:#2d8a3e;">7%</div>
<div class="c rt" style="left:337.60px;top:432.70px;width:70.67px;color:#2d8a3e;">44.00</div>
<div class="c rt" style="left:337.60px;top:641.70px;width:59.07px;color:#000;">-</div>
<div class="c rt" style="left:337.60px;top:652.70px;width:59.07px;color:#000;">-</div>
<div class="c rt" style="left:337.60px;top:663.70px;width:59.07px;color:#000;">-</div>
<div class="c rt" style="left:408.67px;top:366.70px;width:71.07px;color:#2d8a3e;">7%</div>
<div class="c rt" style="left:408.67px;top:432.70px;width:70.67px;color:#2d8a3e;">44.00</div>
<div class="c rt" style="left:408.67px;top:641.70px;width:59.07px;color:#000;">-</div>
<div class="c rt" style="left:408.67px;top:652.70px;width:59.07px;color:#000;">-</div>
<div class="c rt" style="left:408.67px;top:663.70px;width:59.07px;color:#000;">-</div>
<div class="c rt" style="left:479.74px;top:366.70px;width:71.07px;color:#2d8a3e;">7%</div>
<div class="c rt" style="left:479.74px;top:432.70px;width:70.67px;color:#2d8a3e;">44.00</div>
<div class="c rt" style="left:479.74px;top:641.70px;width:59.07px;color:#000;">-</div>
<div class="c rt" style="left:479.74px;top:652.70px;width:59.07px;color:#000;">-</div>
<div class="c rt" style="left:479.74px;top:663.70px;width:59.07px;color:#000;">-</div>
<div class="c rt" style="left:550.81px;top:366.70px;width:71.07px;color:#2d8a3e;">7%</div>
<div class="c rt" style="left:550.81px;top:432.70px;width:70.67px;color:#2d8a3e;">44.00</div>
<div class="c rt" style="left:550.81px;top:641.70px;width:59.07px;color:#000;">-</div>
<div class="c rt" style="left:550.81px;top:652.70px;width:59.07px;color:#000;">-</div>
<div class="c rt" style="left:550.81px;top:663.70px;width:59.07px;color:#000;">-</div>
<div class="c rt" style="left:621.88px;top:366.70px;width:71.07px;color:#2d8a3e;">7%</div>
<div class="c rt" style="left:621.88px;top:432.70px;width:70.67px;color:#2d8a3e;">44.00</div>
<div class="c rt" style="left:621.88px;top:641.70px;width:59.07px;color:#000;">-</div>
<div class="c rt" style="left:621.88px;top:652.70px;width:59.07px;color:#000;">-</div>
<div class="c rt" style="left:621.88px;top:663.70px;width:59.07px;color:#000;">-</div>
<div class="c rt" style="left:692.95px;top:366.70px;width:71.07px;color:#2d8a3e;">7%</div>
<div class="c rt" style="left:692.95px;top:432.70px;width:70.67px;color:#2d8a3e;">44.00</div>
<div class="c rt" style="left:692.95px;top:641.70px;width:59.07px;color:#000;">-</div>
<div class="c rt" style="left:692.95px;top:652.70px;width:59.07px;color:#000;">-</div>
<div class="c rt" style="left:692.95px;top:663.70px;width:59.07px;color:#000;">-</div>
<div class="c rt" style="left:764.02px;top:366.70px;width:71.07px;color:#2d8a3e;">7%</div>
<div class="c rt" style="left:764.02px;top:432.70px;width:70.67px;color:#2d8a3e;">44.00</div>
<div class="c rt" style="left:764.02px;top:641.70px;width:59.07px;color:#000;">-</div>
<div class="c rt" style="left:764.02px;top:652.70px;width:59.07px;color:#000;">-</div>
<div class="c rt" style="left:764.02px;top:663.70px;width:59.07px;color:#000;">-</div>
<div class="c rt" style="left:835.08px;top:366.70px;width:71.07px;color:#2d8a3e;">7%</div>
<div class="c rt" style="left:835.08px;top:432.70px;width:70.67px;color:#2d8a3e;">44.00</div>
<div class="c rt" style="left:835.08px;top:641.70px;width:59.07px;color:#000;">-</div>
<div class="c rt" style="left:835.08px;top:652.70px;width:59.07px;color:#000;">-</div>
<div class="c rt" style="left:835.08px;top:663.70px;width:59.07px;color:#000;">-</div>
<div class="c rt" style="left:906.15px;top:366.70px;width:71.07px;color:#2d8a3e;">7%</div>
<div class="c rt" style="left:906.15px;top:432.70px;width:70.67px;color:#2d8a3e;">44.00</div>
<div class="c rt" style="left:906.15px;top:641.70px;width:59.07px;color:#000;">-</div>
<div class="c rt" style="left:906.15px;top:652.70px;width:59.07px;color:#000;">-</div>
<div class="c rt" style="left:906.15px;top:663.70px;width:59.07px;color:#000;">-</div>
<div class="c rt" style="left:977.22px;top:366.70px;width:71.07px;color:#2d8a3e;">7%</div>
<div class="c rt" style="left:977.22px;top:432.70px;width:70.67px;color:#2d8a3e;">44.00</div>
<div class="c rt" style="left:977.22px;top:641.70px;width:59.07px;color:#000;">-</div>
<div class="c rt" style="left:977.22px;top:652.70px;width:59.07px;color:#000;">-</div>
<div class="c rt" style="left:977.22px;top:663.70px;width:59.07px;color:#000;">-</div>
<div class="c rt" style="left:1048.29px;top:366.70px;width:71.07px;color:#2d8a3e;">7%</div>
<div class="c rt" style="left:1048.29px;top:432.70px;width:70.67px;color:#2d8a3e;">44.00</div>
<div class="c rt" style="left:1048.29px;top:641.70px;width:59.07px;color:#000;">-</div>
<div class="c rt" style="left:1048.29px;top:652.70px;width:59.07px;color:#000;">-</div>
<div class="c rt" style="left:1048.29px;top:663.70px;width:59.07px;color:#000;">-</div>
<div class="c rt" style="left:1119.36px;top:366.70px;width:71.07px;color:#2d8a3e;">7%</div>
<div class="c rt" style="left:1119.36px;top:432.70px;width:70.67px;color:#2d8a3e;">44.00</div>
<div class="c rt" style="left:1119.36px;top:641.70px;width:59.07px;color:#000;">-</div>
<div class="c rt" style="left:1119.36px;top:652.70px;width:59.07px;color:#000;">-</div>
<div class="c rt" style="left:1119.36px;top:663.70px;width:59.07px;color:#000;">-</div>
<div class="c rt" style="left:1190.43px;top:366.70px;width:71.07px;color:#2d8a3e;">7%</div>
<div class="c rt" style="left:1190.43px;top:432.70px;width:70.67px;color:#2d8a3e;">44.00</div>
<div class="c rt" style="left:1190.43px;top:641.70px;width:59.07px;color:#000;">-</div>
<div class="c rt" style="left:1190.43px;top:652.70px;width:59.07px;color:#000;">-</div>
<div class="c rt" style="left:1190.43px;top:663.70px;width:59.07px;color:#000;">-</div>
<div class="c rt" style="left:266.50px;top:322.70px;width:70.10px;color:#2d8a3e;">40.00</div>
<div class="c ct" style="left:267.80px;top:333.70px;width:71.10px;color:#000">TRUE</div>
<div class="c ct" style="left:267.80px;top:542.70px;width:71.10px;color:#000">TRUE</div>
<div class="c rt" style="left:218.00px;top:476.70px;width:47.50px;color:#2d8a3e;">2%</div>
<div class="c rt" style="left:266.50px;top:476.70px;width:71.10px;color:#000;">0.50%</div>
<div class="ab" style="left:20.3px;top:194.3px;width:9.4px;height:9.3px;border:1px solid #fff;background:#2f55c8"></div>
<div class="c" style="left:21px;top:193.9px;color:#fff;font-weight:bold;font-size:7.3px;letter-spacing:-0.1px">Timings</div>
<div class="ab" style="left:18.3px;top:192.3px;width:13.4px;height:13.3px;border:2px solid #1e6e42"></div>
<div class="ab" style="left:27.3px;top:201.6px;width:6px;height:5.6px;background:#fff"></div>
<div class="ab" style="left:28px;top:202.3px;width:5px;height:4.6px;background:#1e6e42"></div>
<div class="ab" style="left:0;top:677px;width:1277px;height:26px;background:linear-gradient(#f4f4f4,#ececec)"></div>
<div class="ab" style="left:0;top:677px;width:1277px;height:1px;background:#d0d0d0"></div>
<svg class="ab" style="left:12px;top:683px" width="36" height="14"><path d="M10 1.5v11l-7-5.5z" fill="#777"/><path d="M26 1.5v11l7-5.5z" fill="#777"/></svg>
<div class="ab" style="left:60.2px;top:679px;width:1px;height:22px;background:#d5d5d5"></div>
<div class="t" style="left:60.2px;top:684px;width:73.8px;text-align:center;font-size:12.4px;color:#555">Contents</div>
<div class="ab" style="left:134.0px;top:679px;width:1px;height:22px;background:#d5d5d5"></div>
<div class="t" style="left:134.0px;top:684px;width:76.0px;text-align:center;font-size:12.4px;color:#555">Summary</div>
<div class="ab" style="left:210.0px;top:679px;width:1px;height:22px;background:#d5d5d5"></div>
<div class="ab" style="left:211.0px;top:677px;width:95.0px;height:3.5px;background:#7fbf8a"></div>
<div class="t" style="left:210.0px;top:684px;width:96.0px;text-align:center;font-size:12.4px;color:#555">Assumptions</div>
<div class="ab" style="left:306.0px;top:679px;width:1px;height:22px;background:#d5d5d5"></div>
<div class="ab" style="left:307.0px;top:677px;width:134.0px;height:3.5px;background:#d67aa8"></div>
<div class="t" style="left:306.0px;top:684px;width:135.0px;text-align:center;font-size:12.4px;color:#555">S&amp;U and Pro-Forma</div>
<div class="ab" style="left:441.0px;top:679px;width:1px;height:22px;background:#d5d5d5"></div>
<div class="ab" style="left:441.0px;top:676px;width:87.0px;height:25px;background:#fff;box-shadow:0 1px 1px rgba(0,0,0,0.25);border-radius:0 0 2px 2px"></div>
<div class="t" style="left:441.0px;top:684px;width:87.0px;text-align:center;font-size:12.3px;font-weight:bold;color:#217346">LBO Model</div>
<div class="ab" style="left:528.0px;top:679px;width:1px;height:22px;background:#d5d5d5"></div>
<div class="t" style="left:528.0px;top:684px;width:170.4px;text-align:center;font-size:12.4px;color:#555">1.05 - Implied COC in LBO</div>
<div class="ab" style="left:698.4px;top:679px;width:1px;height:22px;background:#d5d5d5"></div>
<div class="t" style="left:698.4px;top:684px;width:100.4px;text-align:center;font-size:12.4px;color:#555">Annual Model</div>
<div class="ab" style="left:798.8px;top:679px;width:1px;height:22px;background:#d5d5d5"></div>
<div class="t" style="left:798.8px;top:684px;width:85.9px;text-align:center;font-size:12.4px;color:#555">Audit sheet</div>
<div class="ab" style="left:884.7px;top:679px;width:1px;height:22px;background:#d5d5d5"></div>
<div class="t" style="left:884.7px;top:684px;width:102.3px;text-align:center;font-size:12.4px;color:#555">Tornado Chart</div>
<div class="ab" style="left:987.0px;top:679px;width:1px;height:22px;background:#d5d5d5"></div>
<div class="ab" style="left:988.0px;top:677px;width:90.0px;height:3.5px;background:#e57a86"></div>
<div class="t" style="left:987.0px;top:684px;width:91.0px;text-align:center;font-size:12.4px;color:#555">PE Scenario</div>
<div class="ab" style="left:1078.0px;top:679px;width:1px;height:22px;background:#d5d5d5"></div>
<div class="t" style="left:1078.0px;top:684px;width:73.0px;text-align:center;font-size:12.4px;color:#555">PE Ratio</div>
<div class="ab" style="left:1151.0px;top:679px;width:1px;height:22px;background:#d5d5d5"></div>
<div class="t" style="left:1151.0px;top:681px;width:38.0px;text-align:center;font-size:18px;color:#555;-webkit-text-stroke:0.6px">+</div>
<div class="ab" style="left:1189px;top:679px;width:1px;height:22px;background:#d5d5d5"></div>
<div class="ab" style="left:0;top:702.5px;width:1277px;height:1px;background:#b8b8b8"></div>
<div class="ab" style="left:0;top:703.5px;width:1277px;height:23.5px;background:linear-gradient(#e6e6e6,#d0d0d0);border-radius:0 0 4px 4px"></div>
<div class="t" style="left:24px;top:708.5px;font-size:12.5px;color:#555">Ready</div>
<div class="ab" style="left:993.4px;top:703.5px;width:36.3px;height:23.5px;background:#a9a9a9"></div>
<svg class="ab" style="left:1004px;top:708px" width="15" height="14"><g fill="#fafafa"><rect x="0" y="0" width="4" height="3.5"/><rect x="5" y="0" width="4" height="3.5"/><rect x="10" y="0" width="4" height="3.5"/><rect x="0" y="4.5" width="4" height="3.5"/><rect x="5" y="4.5" width="4" height="3.5"/><rect x="10" y="4.5" width="4" height="3.5"/><rect x="0" y="9" width="4" height="3.5"/><rect x="5" y="9" width="4" height="3.5"/><rect x="10" y="9" width="4" height="3.5"/></g></svg>
<svg class="ab" style="left:1039px;top:707px" width="16" height="15"><rect x="1" y="1" width="13.5" height="13" fill="none" stroke="#666" stroke-width="1.2"/><rect x="3.5" y="3.5" width="8.5" height="8" fill="none" stroke="#666" stroke-width="1"/><path d="M5 5.8h5.5M5 7.5h5.5M5 9.2h5.5" stroke="#666" stroke-width="0.8"/></svg>
<div class="ab" style="left:1073px;top:714.2px;width:8.5px;height:2px;background:#555"></div>
<div class="ab" style="left:1088px;top:712.8px;width:100px;height:4px;background:#9c9c9c;border-radius:2px"></div>
<div class="ab" style="left:1137px;top:714px;width:2px;height:2px;background:#eee;border-radius:1px"></div>
<div class="ab" style="left:1120px;top:708.5px;width:13px;height:13px;background:#fff;border-radius:50%;box-shadow:0 0 0 0.6px #aaa,0 1px 1px rgba(0,0,0,0.2)"></div>
<svg class="ab" style="left:1194px;top:711px" width="10" height="10"><path d="M0 4.5h9M4.5 0v9" stroke="#555" stroke-width="1.7"/></svg>
<div class="t" style="left:1223px;top:708px;font-size:13px;color:#555">75%</div>
<div class="ab" style="left:1277px;top:0;width:3px;height:727px;background:linear-gradient(#1a1a1a 0px,#1a1a1a 50px,#1c2d3c 52px,#1c2d3c 150px,#d6d6d6 152px,#d6d6d6 727px)"></div>
<div class="ab" style="left:1277px;top:52px;width:0.8px;height:675px;background:#9a9a9a"></div>
<div class="ab" style="left:0;top:0;width:1280px;height:1.3px;background:#1a1a1a"></div>
<div class="ab" style="left:0;top:726px;width:1280px;height:1px;background:linear-gradient(90deg,#151515 0px,#151515 40px,#5a2a2a 300px,#a04848 700px,#8a6060 1100px,#b0b0b0 1280px)"></div>
</body></html>
